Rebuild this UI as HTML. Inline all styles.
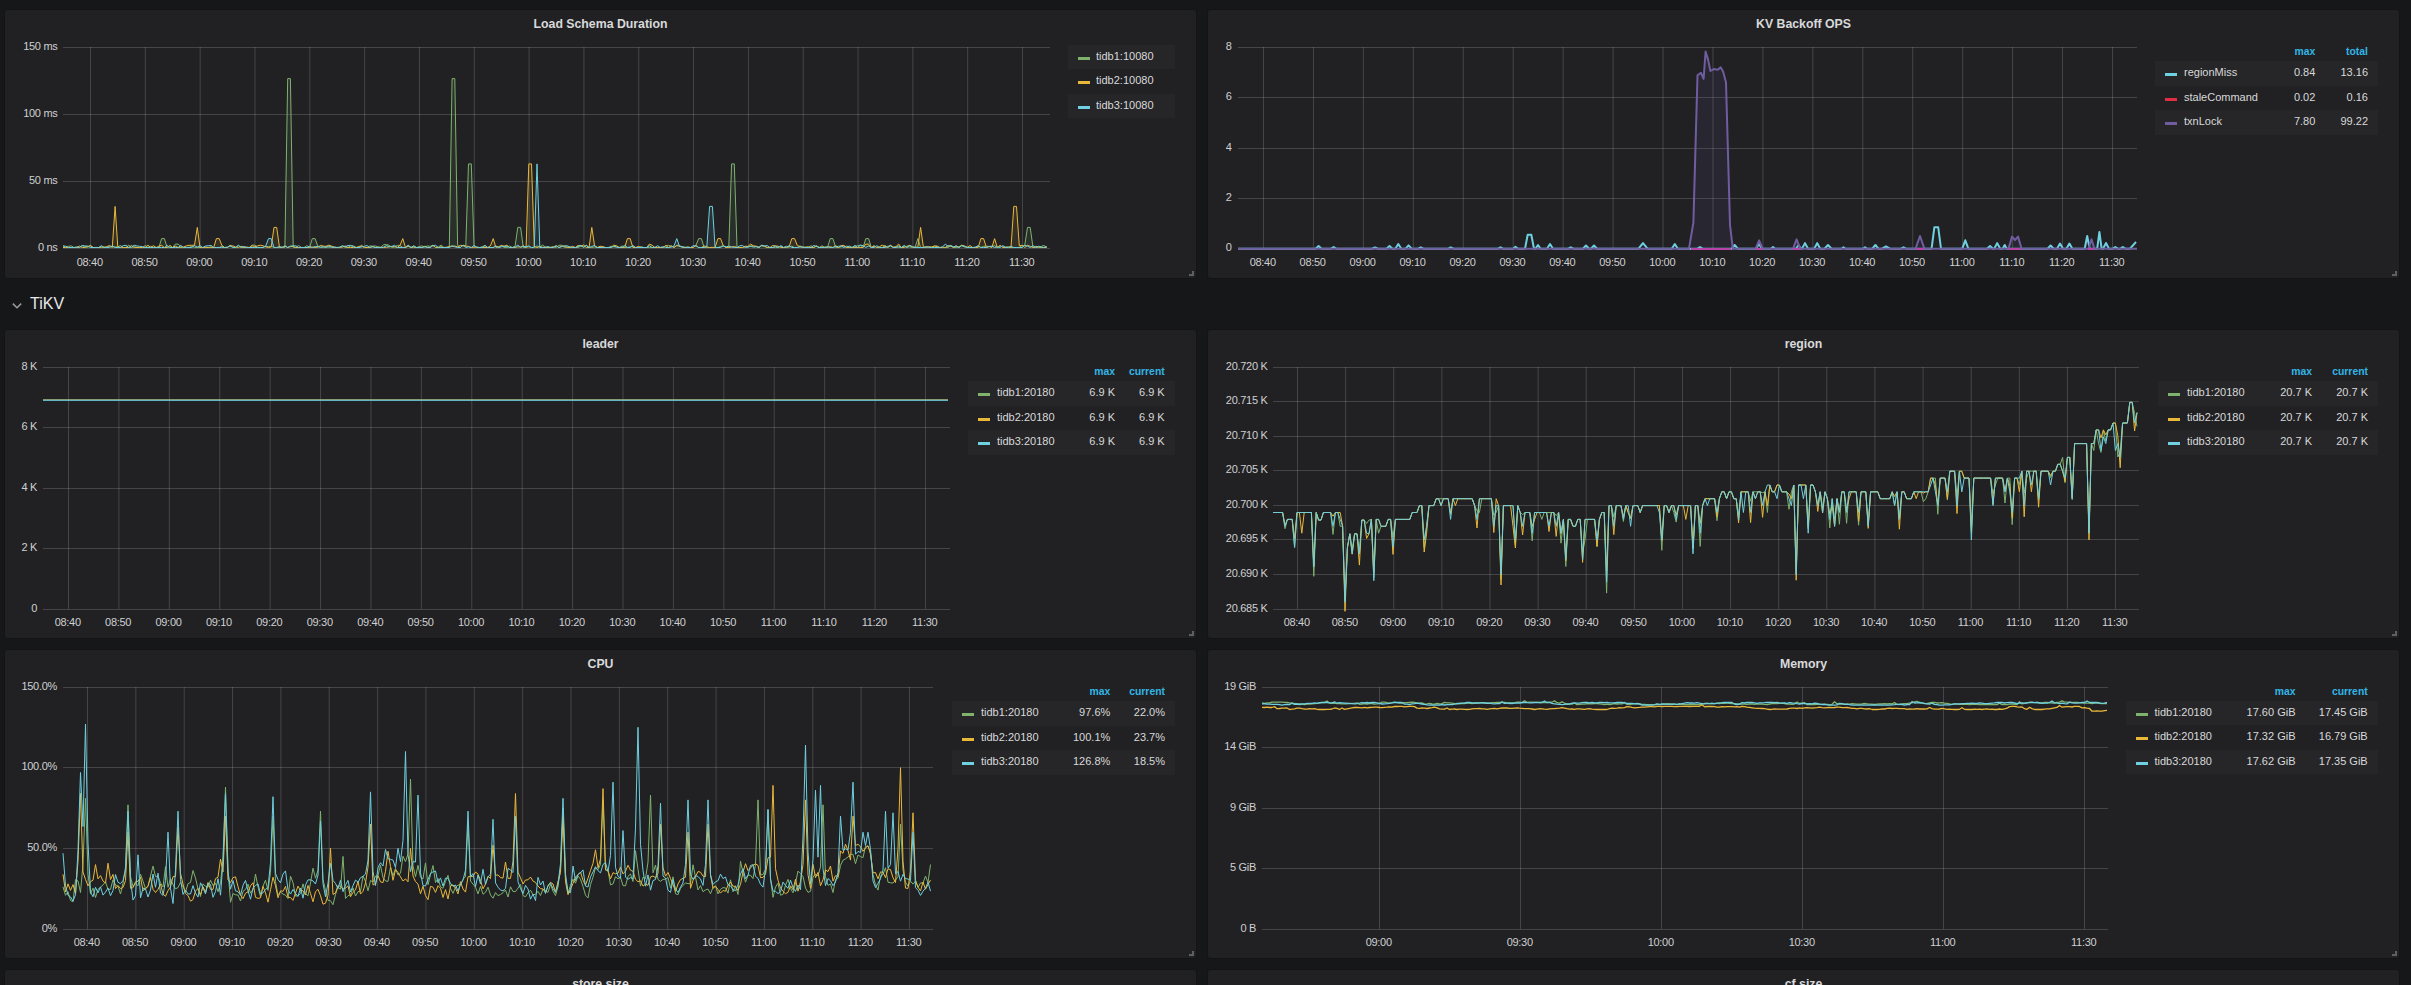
<!DOCTYPE html><html><head><meta charset="utf-8"><title>TiDB dashboard</title><style>

html,body{margin:0;padding:0;}
body{width:2411px;height:985px;background:#161719;position:relative;overflow:hidden;font-family:"Liberation Sans", sans-serif;}
.panel{position:absolute;box-sizing:border-box;background:#212124;border:1px solid #141414;border-radius:3px;}
.ptitle{position:absolute;text-align:center;font-size:12.3px;font-weight:bold;color:#d8d9da;line-height:24px;height:24px;white-space:nowrap;}
.rh{position:absolute;width:6px;height:6px;}
.rh:before{content:"";position:absolute;left:3px;top:1px;width:2px;height:5px;background:#5f5f5f;}
.rh:after{content:"";position:absolute;left:0px;top:4px;width:5px;height:2px;background:#5f5f5f;}
svg{position:absolute;left:0;top:0;}
svg text{font-family:"Liberation Sans", sans-serif;font-size:11px;fill:#cfd0d1;letter-spacing:-0.3px;}
svg text.xl{letter-spacing:-0.3px;}
.leg{position:absolute;left:0;top:0;width:2411px;height:985px;font-size:11px;color:#d8d9da;}
.lrow{position:absolute;background:#262628;}
.sw{position:absolute;width:12px;height:3px;}
.lname,.lval,.lhead{position:absolute;white-space:nowrap;line-height:15px;}
.lval{text-align:right;}
.lhead{text-align:right;font-weight:bold;color:#33b5e5;font-size:10.4px;}
.rowhdr{position:absolute;left:30px;top:292px;font-size:16px;color:#e8e8e8;line-height:24px;}

</style></head><body>
<div class="panel" style="left:4px;top:9px;width:1193px;height:270px"></div>
<div class="ptitle" style="left:4px;top:11.5px;width:1193px">Load Schema Duration</div>
<div class="rh" style="left:1189px;top:270px"></div>
<div class="panel" style="left:1207px;top:9px;width:1193px;height:270px"></div>
<div class="ptitle" style="left:1207px;top:11.5px;width:1193px">KV Backoff OPS</div>
<div class="rh" style="left:2392px;top:270px"></div>
<div class="panel" style="left:4px;top:329px;width:1193px;height:310px"></div>
<div class="ptitle" style="left:4px;top:331.5px;width:1193px">leader</div>
<div class="rh" style="left:1189px;top:630px"></div>
<div class="panel" style="left:1207px;top:329px;width:1193px;height:310px"></div>
<div class="ptitle" style="left:1207px;top:331.5px;width:1193px">region</div>
<div class="rh" style="left:2392px;top:630px"></div>
<div class="panel" style="left:4px;top:649px;width:1193px;height:310px"></div>
<div class="ptitle" style="left:4px;top:651.5px;width:1193px">CPU</div>
<div class="rh" style="left:1189px;top:950px"></div>
<div class="panel" style="left:1207px;top:649px;width:1193px;height:310px"></div>
<div class="ptitle" style="left:1207px;top:651.5px;width:1193px">Memory</div>
<div class="rh" style="left:2392px;top:950px"></div>
<div class="panel" style="left:4px;top:969px;width:1193px;height:310px"></div>
<div class="ptitle" style="left:4px;top:971.5px;width:1193px">store size</div>
<div class="panel" style="left:1207px;top:969px;width:1193px;height:310px"></div>
<div class="ptitle" style="left:1207px;top:971.5px;width:1193px">cf size</div>
<svg width="30" height="30" style="left:0px;top:290px" viewBox="0 0 30 30"><path d="M12.8,13.6 L17,17.8 L21.2,13.6" fill="none" stroke="#9a9a9a" stroke-width="1.5"/></svg>
<div class="rowhdr">TiKV</div>
<div class="leg">
<div class="lrow" style="left:1068px;top:45.0px;width:107px;height:24.4px"></div>
<div class="sw" style="left:1078px;top:56.8px;background:#7eb26d"></div>
<div class="lname" style="left:1096px;top:48.8px">tidb1:10080</div>
<div class="sw" style="left:1078px;top:81.2px;background:#eab839"></div>
<div class="lname" style="left:1096px;top:73.2px">tidb2:10080</div>
<div class="lrow" style="left:1068px;top:93.9px;width:107px;height:24.4px"></div>
<div class="sw" style="left:1078px;top:105.7px;background:#6ed0e0"></div>
<div class="lname" style="left:1096px;top:97.7px">tidb3:10080</div>
</div>
<div class="leg">
<div class="lhead" style="right:95.69999999999982px;top:44.2px">max</div>
<div class="lhead" style="right:43px;top:44.2px">total</div>
<div class="lrow" style="left:2155px;top:61.4px;width:223px;height:24.4px"></div>
<div class="sw" style="left:2165px;top:73.2px;background:#6ed0e0"></div>
<div class="lname" style="left:2184px;top:65.2px">regionMiss</div>
<div class="lval" style="right:95.69999999999982px;top:65.2px">0.84</div>
<div class="lval" style="right:43px;top:65.2px">13.16</div>
<div class="sw" style="left:2165px;top:97.6px;background:#e02f44"></div>
<div class="lname" style="left:2184px;top:89.6px">staleCommand</div>
<div class="lval" style="right:95.69999999999982px;top:89.6px">0.02</div>
<div class="lval" style="right:43px;top:89.6px">0.16</div>
<div class="lrow" style="left:2155px;top:110.3px;width:223px;height:24.4px"></div>
<div class="sw" style="left:2165px;top:122.1px;background:#705da0"></div>
<div class="lname" style="left:2184px;top:114.1px">txnLock</div>
<div class="lval" style="right:95.69999999999982px;top:114.1px">7.80</div>
<div class="lval" style="right:43px;top:114.1px">99.22</div>
</div>
<div class="leg">
<div class="lhead" style="right:1296px;top:364.2px">max</div>
<div class="lhead" style="right:1246.3px;top:364.2px">current</div>
<div class="lrow" style="left:968px;top:381.4px;width:207px;height:24.4px"></div>
<div class="sw" style="left:978px;top:393.2px;background:#7eb26d"></div>
<div class="lname" style="left:997px;top:385.2px">tidb1:20180</div>
<div class="lval" style="right:1296px;top:385.2px">6.9 K</div>
<div class="lval" style="right:1246.3px;top:385.2px">6.9 K</div>
<div class="sw" style="left:978px;top:417.6px;background:#eab839"></div>
<div class="lname" style="left:997px;top:409.6px">tidb2:20180</div>
<div class="lval" style="right:1296px;top:409.6px">6.9 K</div>
<div class="lval" style="right:1246.3px;top:409.6px">6.9 K</div>
<div class="lrow" style="left:968px;top:430.3px;width:207px;height:24.4px"></div>
<div class="sw" style="left:978px;top:442.1px;background:#6ed0e0"></div>
<div class="lname" style="left:997px;top:434.1px">tidb3:20180</div>
<div class="lval" style="right:1296px;top:434.1px">6.9 K</div>
<div class="lval" style="right:1246.3px;top:434.1px">6.9 K</div>
</div>
<div class="leg">
<div class="lhead" style="right:99px;top:364.1px">max</div>
<div class="lhead" style="right:43px;top:364.1px">current</div>
<div class="lrow" style="left:2158px;top:381.3px;width:220px;height:24.4px"></div>
<div class="sw" style="left:2168px;top:393.1px;background:#7eb26d"></div>
<div class="lname" style="left:2187px;top:385.1px">tidb1:20180</div>
<div class="lval" style="right:99px;top:385.1px">20.7 K</div>
<div class="lval" style="right:43px;top:385.1px">20.7 K</div>
<div class="sw" style="left:2168px;top:417.6px;background:#eab839"></div>
<div class="lname" style="left:2187px;top:409.6px">tidb2:20180</div>
<div class="lval" style="right:99px;top:409.6px">20.7 K</div>
<div class="lval" style="right:43px;top:409.6px">20.7 K</div>
<div class="lrow" style="left:2158px;top:430.2px;width:220px;height:24.4px"></div>
<div class="sw" style="left:2168px;top:442.0px;background:#6ed0e0"></div>
<div class="lname" style="left:2187px;top:434.0px">tidb3:20180</div>
<div class="lval" style="right:99px;top:434.0px">20.7 K</div>
<div class="lval" style="right:43px;top:434.0px">20.7 K</div>
</div>
<div class="leg">
<div class="lhead" style="right:1300.7px;top:684.1px">max</div>
<div class="lhead" style="right:1246px;top:684.1px">current</div>
<div class="lrow" style="left:952px;top:701.3px;width:223px;height:24.4px"></div>
<div class="sw" style="left:962px;top:713.1px;background:#7eb26d"></div>
<div class="lname" style="left:981px;top:705.1px">tidb1:20180</div>
<div class="lval" style="right:1300.7px;top:705.1px">97.6%</div>
<div class="lval" style="right:1246px;top:705.1px">22.0%</div>
<div class="sw" style="left:962px;top:737.5px;background:#eab839"></div>
<div class="lname" style="left:981px;top:729.5px">tidb2:20180</div>
<div class="lval" style="right:1300.7px;top:729.5px">100.1%</div>
<div class="lval" style="right:1246px;top:729.5px">23.7%</div>
<div class="lrow" style="left:952px;top:750.2px;width:223px;height:24.4px"></div>
<div class="sw" style="left:962px;top:762.0px;background:#6ed0e0"></div>
<div class="lname" style="left:981px;top:754.0px">tidb3:20180</div>
<div class="lval" style="right:1300.7px;top:754.0px">126.8%</div>
<div class="lval" style="right:1246px;top:754.0px">18.5%</div>
</div>
<div class="leg">
<div class="lhead" style="right:115.5px;top:683.8px">max</div>
<div class="lhead" style="right:43.30000000000018px;top:683.8px">current</div>
<div class="lrow" style="left:2126px;top:701.0px;width:252px;height:24.4px"></div>
<div class="sw" style="left:2135.5px;top:712.8px;background:#7eb26d"></div>
<div class="lname" style="left:2154.4px;top:704.8px">tidb1:20180</div>
<div class="lval" style="right:115.5px;top:704.8px">17.60 GiB</div>
<div class="lval" style="right:43.30000000000018px;top:704.8px">17.45 GiB</div>
<div class="sw" style="left:2135.5px;top:737.2px;background:#eab839"></div>
<div class="lname" style="left:2154.4px;top:729.2px">tidb2:20180</div>
<div class="lval" style="right:115.5px;top:729.2px">17.32 GiB</div>
<div class="lval" style="right:43.30000000000018px;top:729.2px">16.79 GiB</div>
<div class="lrow" style="left:2126px;top:749.9px;width:252px;height:24.4px"></div>
<div class="sw" style="left:2135.5px;top:761.7px;background:#6ed0e0"></div>
<div class="lname" style="left:2154.4px;top:753.7px">tidb3:20180</div>
<div class="lval" style="right:115.5px;top:753.7px">17.62 GiB</div>
<div class="lval" style="right:43.30000000000018px;top:753.7px">17.35 GiB</div>
</div>
<svg width="2411" height="985"><rect x="63" y="47" width="987" height="1" fill="rgba(200,200,200,0.22)"/><rect x="63" y="114" width="987" height="1" fill="rgba(200,200,200,0.22)"/><rect x="63" y="181" width="987" height="1" fill="rgba(200,200,200,0.22)"/><rect x="63" y="248" width="987" height="1" fill="rgba(200,200,200,0.22)"/><rect x="90.00" y="47" width="1" height="201" fill="rgba(200,200,200,0.22)"/><rect x="144.82" y="47" width="1" height="201" fill="rgba(200,200,200,0.22)"/><rect x="199.65" y="47" width="1" height="201" fill="rgba(200,200,200,0.22)"/><rect x="254.47" y="47" width="1" height="201" fill="rgba(200,200,200,0.22)"/><rect x="309.30" y="47" width="1" height="201" fill="rgba(200,200,200,0.22)"/><rect x="364.12" y="47" width="1" height="201" fill="rgba(200,200,200,0.22)"/><rect x="418.94" y="47" width="1" height="201" fill="rgba(200,200,200,0.22)"/><rect x="473.77" y="47" width="1" height="201" fill="rgba(200,200,200,0.22)"/><rect x="528.59" y="47" width="1" height="201" fill="rgba(200,200,200,0.22)"/><rect x="583.42" y="47" width="1" height="201" fill="rgba(200,200,200,0.22)"/><rect x="638.24" y="47" width="1" height="201" fill="rgba(200,200,200,0.22)"/><rect x="693.06" y="47" width="1" height="201" fill="rgba(200,200,200,0.22)"/><rect x="747.89" y="47" width="1" height="201" fill="rgba(200,200,200,0.22)"/><rect x="802.71" y="47" width="1" height="201" fill="rgba(200,200,200,0.22)"/><rect x="857.54" y="47" width="1" height="201" fill="rgba(200,200,200,0.22)"/><rect x="912.36" y="47" width="1" height="201" fill="rgba(200,200,200,0.22)"/><rect x="967.18" y="47" width="1" height="201" fill="rgba(200,200,200,0.22)"/><rect x="1022.01" y="47" width="1" height="201" fill="rgba(200,200,200,0.22)"/><path d="M63.0,247.5L63.0,245.5L65.7,247.5L68.5,246.3L71.2,245.9L74.0,247.5L76.7,247.4L79.4,247.5L82.2,245.7L84.9,246.4L87.7,247.5L90.4,245.2L93.1,247.5L95.9,247.4L98.6,247.5L101.4,247.5L104.1,247.0L106.8,247.4L109.6,246.4L112.3,246.9L115.1,247.0L117.8,246.8L120.5,245.5L123.3,247.5L126.0,247.5L128.8,245.1L131.5,247.5L134.2,246.7L137.0,247.5L139.7,247.5L142.5,247.5L145.2,245.5L147.9,247.5L150.7,246.1L153.4,247.5L156.2,247.5L158.9,247.5L161.6,238.6L164.4,238.6L167.1,247.5L169.9,247.1L172.6,247.5L175.3,244.1L178.1,244.1L180.8,246.4L183.6,247.5L186.3,247.5L189.0,247.5L191.8,246.3L194.5,247.4L197.3,247.5L200.0,247.5L202.7,247.5L205.5,247.1L208.2,247.5L211.0,247.5L213.7,247.5L216.4,247.5L219.2,247.5L221.9,246.3L224.7,247.5L227.4,247.5L230.1,245.1L232.9,247.5L235.6,247.5L238.4,245.6L241.1,247.5L243.8,247.5L246.6,247.5L249.3,247.5L252.1,245.1L254.8,245.1L257.5,247.4L260.3,247.5L263.0,247.5L265.8,246.3L268.5,246.6L271.2,246.2L274.0,247.5L276.7,247.5L279.5,247.4L282.2,247.1L284.9,247.5L287.7,78.6L290.4,78.6L293.2,247.5L295.9,247.5L298.6,245.5L301.4,247.5L304.1,247.5L306.9,245.7L309.6,247.2L312.3,238.6L315.1,238.6L317.8,246.2L320.6,246.8L323.3,247.5L326.0,246.7L328.8,247.4L331.5,246.5L334.3,247.2L337.0,247.5L339.7,247.5L342.5,246.0L345.2,247.5L348.0,247.5L350.7,245.8L353.4,245.8L356.2,247.5L358.9,247.5L361.7,245.2L364.4,247.5L367.1,247.5L369.9,245.9L372.6,246.1L375.4,246.0L378.1,246.8L380.8,247.5L383.6,244.6L386.3,244.6L389.1,245.2L391.8,247.5L394.5,246.9L397.3,245.4L400.0,245.5L402.8,247.5L405.5,247.5L408.2,245.4L411.0,247.5L413.7,247.5L416.5,247.5L419.2,246.7L421.9,245.9L424.7,247.0L427.4,245.9L430.2,246.3L432.9,245.4L435.6,247.5L438.4,247.0L441.1,245.1L443.9,247.5L446.6,247.0L449.3,247.5L452.1,78.6L454.8,78.6L457.6,245.4L460.3,247.5L463.0,245.1L465.8,245.8L468.5,163.9L471.3,163.9L474.0,245.7L476.7,247.5L479.5,247.5L482.2,246.7L485.0,245.4L487.7,247.5L490.4,247.5L493.2,247.5L495.9,246.2L498.7,247.4L501.4,245.4L504.1,247.5L506.9,247.5L509.6,246.0L512.4,247.5L515.1,246.1L517.8,227.4L520.6,227.4L523.3,247.5L526.1,247.5L528.8,246.8L531.5,247.5L534.3,247.5L537.0,245.9L539.8,247.2L542.5,245.1L545.2,246.9L548.0,247.5L550.7,247.2L553.5,246.9L556.2,247.5L558.9,245.3L561.7,245.2L564.4,247.5L567.2,246.9L569.9,247.3L572.6,247.5L575.4,247.5L578.1,247.5L580.9,246.1L583.6,246.7L586.3,245.3L589.1,247.5L591.8,247.5L594.6,247.0L597.3,247.5L600.0,247.5L602.8,247.5L605.5,247.5L608.3,247.5L611.0,246.2L613.7,246.9L616.5,246.8L619.2,247.5L622.0,245.9L624.7,247.5L627.4,247.5L630.2,246.8L632.9,246.7L635.7,247.5L638.4,247.5L641.1,246.7L643.9,247.5L646.6,247.5L649.4,247.5L652.1,247.5L654.8,247.3L657.6,247.5L660.3,247.3L663.1,247.5L665.8,245.6L668.5,245.4L671.3,246.3L674.0,247.5L676.8,245.2L679.5,245.6L682.2,247.5L685.0,247.5L687.7,247.2L690.5,247.5L693.2,247.5L695.9,245.4L698.7,238.6L701.4,238.6L704.2,247.5L706.9,247.5L709.6,247.5L712.4,247.5L715.1,247.5L717.9,247.5L720.6,246.5L723.3,245.8L726.1,247.5L728.8,247.3L731.6,163.9L734.3,163.9L737.0,247.5L739.8,247.5L742.5,247.5L745.3,246.6L748.0,246.9L750.7,245.9L753.5,246.1L756.2,246.6L759.0,247.2L761.7,245.5L764.4,246.5L767.2,247.5L769.9,247.5L772.7,247.5L775.4,247.5L778.1,247.5L780.9,245.9L783.6,247.5L786.4,246.3L789.1,247.0L791.8,246.2L794.6,247.5L797.3,247.5L800.1,245.9L802.8,247.3L805.5,247.5L808.3,247.5L811.0,245.7L813.8,247.5L816.5,245.8L819.2,247.5L822.0,245.8L824.7,247.5L827.5,247.5L830.2,238.6L832.9,238.6L835.7,247.5L838.4,247.5L841.2,246.9L843.9,246.1L846.6,247.5L849.4,245.9L852.1,247.5L854.9,246.3L857.6,245.7L860.3,245.1L863.1,247.5L865.8,238.6L868.6,238.6L871.3,247.5L874.0,245.6L876.8,247.5L879.5,247.5L882.3,247.5L885.0,245.3L887.7,247.5L890.5,245.6L893.2,247.1L896.0,247.2L898.7,247.5L901.4,247.5L904.2,246.1L906.9,247.2L909.7,246.9L912.4,247.5L915.1,247.0L917.9,238.6L920.6,247.5L923.4,247.5L926.1,247.5L928.8,246.8L931.6,247.5L934.3,246.1L937.1,245.9L939.8,247.5L942.5,247.5L945.3,247.5L948.0,247.5L950.8,245.4L953.5,247.5L956.2,247.5L959.0,246.8L961.7,245.6L964.5,245.7L967.2,247.5L969.9,247.5L972.7,247.5L975.4,247.5L978.2,246.3L980.9,247.5L983.6,246.3L986.4,246.2L989.1,246.4L991.9,246.8L994.6,245.6L997.3,247.5L1000.1,245.9L1002.8,247.0L1005.6,246.8L1008.3,247.5L1011.0,247.5L1013.8,247.5L1016.5,247.5L1019.3,247.5L1022.0,245.5L1024.7,245.7L1027.5,227.4L1030.2,227.4L1033.0,247.5L1035.7,247.5L1038.4,247.5L1041.2,246.5L1043.9,245.4L1046.7,247.5L1046.7,247.5Z" fill="#7eb26d" fill-opacity="0.1" stroke="none"/><path d="M63.0,245.5L65.7,247.5L68.5,246.3L71.2,245.9L74.0,247.5L76.7,247.4L79.4,247.5L82.2,245.7L84.9,246.4L87.7,247.5L90.4,245.2L93.1,247.5L95.9,247.4L98.6,247.5L101.4,247.5L104.1,247.0L106.8,247.4L109.6,246.4L112.3,246.9L115.1,247.0L117.8,246.8L120.5,245.5L123.3,247.5L126.0,247.5L128.8,245.1L131.5,247.5L134.2,246.7L137.0,247.5L139.7,247.5L142.5,247.5L145.2,245.5L147.9,247.5L150.7,246.1L153.4,247.5L156.2,247.5L158.9,247.5L161.6,238.6L164.4,238.6L167.1,247.5L169.9,247.1L172.6,247.5L175.3,244.1L178.1,244.1L180.8,246.4L183.6,247.5L186.3,247.5L189.0,247.5L191.8,246.3L194.5,247.4L197.3,247.5L200.0,247.5L202.7,247.5L205.5,247.1L208.2,247.5L211.0,247.5L213.7,247.5L216.4,247.5L219.2,247.5L221.9,246.3L224.7,247.5L227.4,247.5L230.1,245.1L232.9,247.5L235.6,247.5L238.4,245.6L241.1,247.5L243.8,247.5L246.6,247.5L249.3,247.5L252.1,245.1L254.8,245.1L257.5,247.4L260.3,247.5L263.0,247.5L265.8,246.3L268.5,246.6L271.2,246.2L274.0,247.5L276.7,247.5L279.5,247.4L282.2,247.1L284.9,247.5L287.7,78.6L290.4,78.6L293.2,247.5L295.9,247.5L298.6,245.5L301.4,247.5L304.1,247.5L306.9,245.7L309.6,247.2L312.3,238.6L315.1,238.6L317.8,246.2L320.6,246.8L323.3,247.5L326.0,246.7L328.8,247.4L331.5,246.5L334.3,247.2L337.0,247.5L339.7,247.5L342.5,246.0L345.2,247.5L348.0,247.5L350.7,245.8L353.4,245.8L356.2,247.5L358.9,247.5L361.7,245.2L364.4,247.5L367.1,247.5L369.9,245.9L372.6,246.1L375.4,246.0L378.1,246.8L380.8,247.5L383.6,244.6L386.3,244.6L389.1,245.2L391.8,247.5L394.5,246.9L397.3,245.4L400.0,245.5L402.8,247.5L405.5,247.5L408.2,245.4L411.0,247.5L413.7,247.5L416.5,247.5L419.2,246.7L421.9,245.9L424.7,247.0L427.4,245.9L430.2,246.3L432.9,245.4L435.6,247.5L438.4,247.0L441.1,245.1L443.9,247.5L446.6,247.0L449.3,247.5L452.1,78.6L454.8,78.6L457.6,245.4L460.3,247.5L463.0,245.1L465.8,245.8L468.5,163.9L471.3,163.9L474.0,245.7L476.7,247.5L479.5,247.5L482.2,246.7L485.0,245.4L487.7,247.5L490.4,247.5L493.2,247.5L495.9,246.2L498.7,247.4L501.4,245.4L504.1,247.5L506.9,247.5L509.6,246.0L512.4,247.5L515.1,246.1L517.8,227.4L520.6,227.4L523.3,247.5L526.1,247.5L528.8,246.8L531.5,247.5L534.3,247.5L537.0,245.9L539.8,247.2L542.5,245.1L545.2,246.9L548.0,247.5L550.7,247.2L553.5,246.9L556.2,247.5L558.9,245.3L561.7,245.2L564.4,247.5L567.2,246.9L569.9,247.3L572.6,247.5L575.4,247.5L578.1,247.5L580.9,246.1L583.6,246.7L586.3,245.3L589.1,247.5L591.8,247.5L594.6,247.0L597.3,247.5L600.0,247.5L602.8,247.5L605.5,247.5L608.3,247.5L611.0,246.2L613.7,246.9L616.5,246.8L619.2,247.5L622.0,245.9L624.7,247.5L627.4,247.5L630.2,246.8L632.9,246.7L635.7,247.5L638.4,247.5L641.1,246.7L643.9,247.5L646.6,247.5L649.4,247.5L652.1,247.5L654.8,247.3L657.6,247.5L660.3,247.3L663.1,247.5L665.8,245.6L668.5,245.4L671.3,246.3L674.0,247.5L676.8,245.2L679.5,245.6L682.2,247.5L685.0,247.5L687.7,247.2L690.5,247.5L693.2,247.5L695.9,245.4L698.7,238.6L701.4,238.6L704.2,247.5L706.9,247.5L709.6,247.5L712.4,247.5L715.1,247.5L717.9,247.5L720.6,246.5L723.3,245.8L726.1,247.5L728.8,247.3L731.6,163.9L734.3,163.9L737.0,247.5L739.8,247.5L742.5,247.5L745.3,246.6L748.0,246.9L750.7,245.9L753.5,246.1L756.2,246.6L759.0,247.2L761.7,245.5L764.4,246.5L767.2,247.5L769.9,247.5L772.7,247.5L775.4,247.5L778.1,247.5L780.9,245.9L783.6,247.5L786.4,246.3L789.1,247.0L791.8,246.2L794.6,247.5L797.3,247.5L800.1,245.9L802.8,247.3L805.5,247.5L808.3,247.5L811.0,245.7L813.8,247.5L816.5,245.8L819.2,247.5L822.0,245.8L824.7,247.5L827.5,247.5L830.2,238.6L832.9,238.6L835.7,247.5L838.4,247.5L841.2,246.9L843.9,246.1L846.6,247.5L849.4,245.9L852.1,247.5L854.9,246.3L857.6,245.7L860.3,245.1L863.1,247.5L865.8,238.6L868.6,238.6L871.3,247.5L874.0,245.6L876.8,247.5L879.5,247.5L882.3,247.5L885.0,245.3L887.7,247.5L890.5,245.6L893.2,247.1L896.0,247.2L898.7,247.5L901.4,247.5L904.2,246.1L906.9,247.2L909.7,246.9L912.4,247.5L915.1,247.0L917.9,238.6L920.6,247.5L923.4,247.5L926.1,247.5L928.8,246.8L931.6,247.5L934.3,246.1L937.1,245.9L939.8,247.5L942.5,247.5L945.3,247.5L948.0,247.5L950.8,245.4L953.5,247.5L956.2,247.5L959.0,246.8L961.7,245.6L964.5,245.7L967.2,247.5L969.9,247.5L972.7,247.5L975.4,247.5L978.2,246.3L980.9,247.5L983.6,246.3L986.4,246.2L989.1,246.4L991.9,246.8L994.6,245.6L997.3,247.5L1000.1,245.9L1002.8,247.0L1005.6,246.8L1008.3,247.5L1011.0,247.5L1013.8,247.5L1016.5,247.5L1019.3,247.5L1022.0,245.5L1024.7,245.7L1027.5,227.4L1030.2,227.4L1033.0,247.5L1035.7,247.5L1038.4,247.5L1041.2,246.5L1043.9,245.4L1046.7,247.5" fill="none" stroke="#7eb26d" stroke-width="1" stroke-linejoin="round"/><path d="M63.0,247.5L63.0,247.5L65.7,247.5L68.5,247.3L71.2,247.5L74.0,247.5L76.7,247.5L79.4,246.0L82.2,247.5L84.9,247.5L87.7,246.5L90.4,245.8L93.1,247.5L95.9,247.5L98.6,247.5L101.4,246.9L104.1,247.4L106.8,246.7L109.6,245.4L112.3,247.5L115.1,206.4L117.8,247.4L120.5,247.2L123.3,247.5L126.0,247.5L128.8,247.5L131.5,245.4L134.2,247.5L137.0,247.5L139.7,247.5L142.5,247.5L145.2,247.5L147.9,245.1L150.7,247.5L153.4,245.7L156.2,247.5L158.9,246.2L161.6,245.3L164.4,247.5L167.1,247.5L169.9,245.4L172.6,247.5L175.3,246.1L178.1,247.5L180.8,247.5L183.6,247.0L186.3,245.8L189.0,245.3L191.8,245.3L194.5,245.2L197.3,227.4L200.0,247.5L202.7,247.5L205.5,247.5L208.2,247.5L211.0,247.0L213.7,247.5L216.4,238.6L219.2,238.6L221.9,245.5L224.7,247.5L227.4,247.5L230.1,245.7L232.9,245.9L235.6,247.0L238.4,247.5L241.1,246.2L243.8,247.5L246.6,247.0L249.3,247.5L252.1,245.8L254.8,246.6L257.5,245.9L260.3,245.2L263.0,245.8L265.8,246.9L268.5,247.5L271.2,247.1L274.0,227.4L276.7,227.4L279.5,247.5L282.2,247.4L284.9,246.0L287.7,247.5L290.4,246.7L293.2,246.4L295.9,247.5L298.6,247.5L301.4,247.5L304.1,247.5L306.9,247.5L309.6,247.5L312.3,247.0L315.1,247.5L317.8,247.3L320.6,245.4L323.3,246.1L326.0,246.3L328.8,245.2L331.5,246.0L334.3,247.5L337.0,247.5L339.7,247.4L342.5,247.1L345.2,246.0L348.0,247.5L350.7,247.5L353.4,247.5L356.2,247.5L358.9,246.4L361.7,246.1L364.4,247.5L367.1,247.5L369.9,247.5L372.6,246.5L375.4,247.5L378.1,247.4L380.8,247.2L383.6,247.5L386.3,247.3L389.1,246.9L391.8,246.3L394.5,246.8L397.3,247.5L400.0,245.3L402.8,238.6L405.5,247.5L408.2,246.3L411.0,247.5L413.7,246.5L416.5,247.5L419.2,247.3L421.9,247.5L424.7,246.3L427.4,247.5L430.2,247.5L432.9,245.1L435.6,247.5L438.4,247.5L441.1,246.8L443.9,247.5L446.6,247.5L449.3,246.4L452.1,246.3L454.8,246.1L457.6,246.8L460.3,245.3L463.0,245.7L465.8,246.1L468.5,246.4L471.3,247.5L474.0,247.2L476.7,247.3L479.5,247.5L482.2,247.5L485.0,247.5L487.7,247.5L490.4,245.9L493.2,238.6L495.9,247.5L498.7,246.6L501.4,245.6L504.1,246.2L506.9,245.2L509.6,247.5L512.4,247.5L515.1,247.5L517.8,246.9L520.6,246.9L523.3,245.9L526.1,247.5L528.8,163.9L531.5,163.9L534.3,246.6L537.0,247.5L539.8,246.5L542.5,247.3L545.2,247.5L548.0,247.5L550.7,247.5L553.5,246.8L556.2,245.9L558.9,247.5L561.7,246.2L564.4,246.2L567.2,247.5L569.9,247.5L572.6,246.3L575.4,247.5L578.1,245.4L580.9,245.8L583.6,245.1L586.3,247.5L589.1,247.5L591.8,227.4L594.6,246.1L597.3,247.5L600.0,246.3L602.8,246.5L605.5,247.5L608.3,247.5L611.0,247.5L613.7,245.2L616.5,245.7L619.2,247.5L622.0,247.5L624.7,247.5L627.4,238.6L630.2,238.6L632.9,247.5L635.7,247.5L638.4,246.4L641.1,247.5L643.9,247.5L646.6,247.5L649.4,244.1L652.1,245.2L654.8,247.5L657.6,247.5L660.3,247.5L663.1,247.5L665.8,245.5L668.5,247.5L671.3,245.7L674.0,247.5L676.8,245.6L679.5,246.0L682.2,246.9L685.0,247.5L687.7,247.0L690.5,247.5L693.2,247.5L695.9,245.5L698.7,247.5L701.4,247.5L704.2,245.9L706.9,246.9L709.6,247.5L712.4,247.3L715.1,247.5L717.9,238.6L720.6,238.6L723.3,245.9L726.1,247.5L728.8,247.5L731.6,247.1L734.3,246.4L737.0,247.5L739.8,247.5L742.5,247.5L745.3,246.2L748.0,246.4L750.7,244.1L753.5,245.9L756.2,246.2L759.0,247.5L761.7,245.5L764.4,245.9L767.2,247.5L769.9,247.5L772.7,245.5L775.4,246.0L778.1,246.2L780.9,247.5L783.6,247.5L786.4,247.5L789.1,246.9L791.8,238.6L794.6,238.6L797.3,245.5L800.1,246.6L802.8,247.3L805.5,247.1L808.3,246.8L811.0,247.5L813.8,247.5L816.5,246.0L819.2,247.5L822.0,247.3L824.7,247.0L827.5,247.5L830.2,246.6L832.9,247.5L835.7,245.6L838.4,247.5L841.2,245.5L843.9,245.4L846.6,247.5L849.4,247.5L852.1,247.5L854.9,247.5L857.6,247.5L860.3,247.5L863.1,247.5L865.8,244.1L868.6,244.1L871.3,247.5L874.0,246.0L876.8,247.5L879.5,246.6L882.3,245.2L885.0,246.4L887.7,247.5L890.5,245.2L893.2,247.4L896.0,246.6L898.7,244.1L901.4,247.5L904.2,247.5L906.9,246.2L909.7,245.5L912.4,246.8L915.1,247.5L917.9,246.7L920.6,227.4L923.4,247.2L926.1,246.9L928.8,246.9L931.6,246.9L934.3,246.0L937.1,246.6L939.8,247.5L942.5,247.2L945.3,247.5L948.0,245.6L950.8,246.2L953.5,247.5L956.2,245.7L959.0,247.5L961.7,245.1L964.5,246.4L967.2,247.5L969.9,245.5L972.7,247.5L975.4,247.5L978.2,247.5L980.9,238.6L983.6,238.6L986.4,247.5L989.1,246.5L991.9,247.5L994.6,238.6L997.3,247.5L1000.1,245.3L1002.8,247.5L1005.6,247.5L1008.3,246.8L1011.0,247.5L1013.8,206.4L1016.5,206.4L1019.3,245.9L1022.0,245.2L1024.7,247.5L1027.5,245.3L1030.2,246.3L1033.0,247.5L1035.7,246.3L1038.4,247.0L1041.2,247.5L1043.9,247.5L1046.7,247.5L1046.7,247.5Z" fill="#eab839" fill-opacity="0.1" stroke="none"/><path d="M63.0,247.5L65.7,247.5L68.5,247.3L71.2,247.5L74.0,247.5L76.7,247.5L79.4,246.0L82.2,247.5L84.9,247.5L87.7,246.5L90.4,245.8L93.1,247.5L95.9,247.5L98.6,247.5L101.4,246.9L104.1,247.4L106.8,246.7L109.6,245.4L112.3,247.5L115.1,206.4L117.8,247.4L120.5,247.2L123.3,247.5L126.0,247.5L128.8,247.5L131.5,245.4L134.2,247.5L137.0,247.5L139.7,247.5L142.5,247.5L145.2,247.5L147.9,245.1L150.7,247.5L153.4,245.7L156.2,247.5L158.9,246.2L161.6,245.3L164.4,247.5L167.1,247.5L169.9,245.4L172.6,247.5L175.3,246.1L178.1,247.5L180.8,247.5L183.6,247.0L186.3,245.8L189.0,245.3L191.8,245.3L194.5,245.2L197.3,227.4L200.0,247.5L202.7,247.5L205.5,247.5L208.2,247.5L211.0,247.0L213.7,247.5L216.4,238.6L219.2,238.6L221.9,245.5L224.7,247.5L227.4,247.5L230.1,245.7L232.9,245.9L235.6,247.0L238.4,247.5L241.1,246.2L243.8,247.5L246.6,247.0L249.3,247.5L252.1,245.8L254.8,246.6L257.5,245.9L260.3,245.2L263.0,245.8L265.8,246.9L268.5,247.5L271.2,247.1L274.0,227.4L276.7,227.4L279.5,247.5L282.2,247.4L284.9,246.0L287.7,247.5L290.4,246.7L293.2,246.4L295.9,247.5L298.6,247.5L301.4,247.5L304.1,247.5L306.9,247.5L309.6,247.5L312.3,247.0L315.1,247.5L317.8,247.3L320.6,245.4L323.3,246.1L326.0,246.3L328.8,245.2L331.5,246.0L334.3,247.5L337.0,247.5L339.7,247.4L342.5,247.1L345.2,246.0L348.0,247.5L350.7,247.5L353.4,247.5L356.2,247.5L358.9,246.4L361.7,246.1L364.4,247.5L367.1,247.5L369.9,247.5L372.6,246.5L375.4,247.5L378.1,247.4L380.8,247.2L383.6,247.5L386.3,247.3L389.1,246.9L391.8,246.3L394.5,246.8L397.3,247.5L400.0,245.3L402.8,238.6L405.5,247.5L408.2,246.3L411.0,247.5L413.7,246.5L416.5,247.5L419.2,247.3L421.9,247.5L424.7,246.3L427.4,247.5L430.2,247.5L432.9,245.1L435.6,247.5L438.4,247.5L441.1,246.8L443.9,247.5L446.6,247.5L449.3,246.4L452.1,246.3L454.8,246.1L457.6,246.8L460.3,245.3L463.0,245.7L465.8,246.1L468.5,246.4L471.3,247.5L474.0,247.2L476.7,247.3L479.5,247.5L482.2,247.5L485.0,247.5L487.7,247.5L490.4,245.9L493.2,238.6L495.9,247.5L498.7,246.6L501.4,245.6L504.1,246.2L506.9,245.2L509.6,247.5L512.4,247.5L515.1,247.5L517.8,246.9L520.6,246.9L523.3,245.9L526.1,247.5L528.8,163.9L531.5,163.9L534.3,246.6L537.0,247.5L539.8,246.5L542.5,247.3L545.2,247.5L548.0,247.5L550.7,247.5L553.5,246.8L556.2,245.9L558.9,247.5L561.7,246.2L564.4,246.2L567.2,247.5L569.9,247.5L572.6,246.3L575.4,247.5L578.1,245.4L580.9,245.8L583.6,245.1L586.3,247.5L589.1,247.5L591.8,227.4L594.6,246.1L597.3,247.5L600.0,246.3L602.8,246.5L605.5,247.5L608.3,247.5L611.0,247.5L613.7,245.2L616.5,245.7L619.2,247.5L622.0,247.5L624.7,247.5L627.4,238.6L630.2,238.6L632.9,247.5L635.7,247.5L638.4,246.4L641.1,247.5L643.9,247.5L646.6,247.5L649.4,244.1L652.1,245.2L654.8,247.5L657.6,247.5L660.3,247.5L663.1,247.5L665.8,245.5L668.5,247.5L671.3,245.7L674.0,247.5L676.8,245.6L679.5,246.0L682.2,246.9L685.0,247.5L687.7,247.0L690.5,247.5L693.2,247.5L695.9,245.5L698.7,247.5L701.4,247.5L704.2,245.9L706.9,246.9L709.6,247.5L712.4,247.3L715.1,247.5L717.9,238.6L720.6,238.6L723.3,245.9L726.1,247.5L728.8,247.5L731.6,247.1L734.3,246.4L737.0,247.5L739.8,247.5L742.5,247.5L745.3,246.2L748.0,246.4L750.7,244.1L753.5,245.9L756.2,246.2L759.0,247.5L761.7,245.5L764.4,245.9L767.2,247.5L769.9,247.5L772.7,245.5L775.4,246.0L778.1,246.2L780.9,247.5L783.6,247.5L786.4,247.5L789.1,246.9L791.8,238.6L794.6,238.6L797.3,245.5L800.1,246.6L802.8,247.3L805.5,247.1L808.3,246.8L811.0,247.5L813.8,247.5L816.5,246.0L819.2,247.5L822.0,247.3L824.7,247.0L827.5,247.5L830.2,246.6L832.9,247.5L835.7,245.6L838.4,247.5L841.2,245.5L843.9,245.4L846.6,247.5L849.4,247.5L852.1,247.5L854.9,247.5L857.6,247.5L860.3,247.5L863.1,247.5L865.8,244.1L868.6,244.1L871.3,247.5L874.0,246.0L876.8,247.5L879.5,246.6L882.3,245.2L885.0,246.4L887.7,247.5L890.5,245.2L893.2,247.4L896.0,246.6L898.7,244.1L901.4,247.5L904.2,247.5L906.9,246.2L909.7,245.5L912.4,246.8L915.1,247.5L917.9,246.7L920.6,227.4L923.4,247.2L926.1,246.9L928.8,246.9L931.6,246.9L934.3,246.0L937.1,246.6L939.8,247.5L942.5,247.2L945.3,247.5L948.0,245.6L950.8,246.2L953.5,247.5L956.2,245.7L959.0,247.5L961.7,245.1L964.5,246.4L967.2,247.5L969.9,245.5L972.7,247.5L975.4,247.5L978.2,247.5L980.9,238.6L983.6,238.6L986.4,247.5L989.1,246.5L991.9,247.5L994.6,238.6L997.3,247.5L1000.1,245.3L1002.8,247.5L1005.6,247.5L1008.3,246.8L1011.0,247.5L1013.8,206.4L1016.5,206.4L1019.3,245.9L1022.0,245.2L1024.7,247.5L1027.5,245.3L1030.2,246.3L1033.0,247.5L1035.7,246.3L1038.4,247.0L1041.2,247.5L1043.9,247.5L1046.7,247.5" fill="none" stroke="#eab839" stroke-width="1" stroke-linejoin="round"/><path d="M63.0,247.5L63.0,246.2L65.7,246.1L68.5,247.5L71.2,247.5L74.0,247.5L76.7,246.9L79.4,247.5L82.2,245.5L84.9,246.0L87.7,246.0L90.4,247.5L93.1,247.5L95.9,247.5L98.6,247.5L101.4,245.7L104.1,247.5L106.8,247.4L109.6,247.5L112.3,245.8L115.1,247.5L117.8,247.5L120.5,247.5L123.3,245.6L126.0,245.3L128.8,247.5L131.5,247.2L134.2,245.2L137.0,246.0L139.7,246.3L142.5,246.7L145.2,247.5L147.9,247.5L150.7,247.5L153.4,247.5L156.2,247.5L158.9,247.5L161.6,247.5L164.4,247.5L167.1,245.4L169.9,247.5L172.6,247.5L175.3,247.5L178.1,247.5L180.8,245.5L183.6,247.5L186.3,247.3L189.0,247.5L191.8,247.5L194.5,245.6L197.3,247.1L200.0,245.7L202.7,247.5L205.5,246.0L208.2,245.8L211.0,245.4L213.7,247.5L216.4,247.5L219.2,247.5L221.9,247.3L224.7,247.5L227.4,247.0L230.1,246.0L232.9,247.4L235.6,247.5L238.4,245.2L241.1,247.5L243.8,246.4L246.6,247.5L249.3,247.5L252.1,247.5L254.8,247.5L257.5,247.5L260.3,247.5L263.0,247.5L265.8,245.8L268.5,238.6L271.2,238.6L274.0,247.5L276.7,247.5L279.5,246.5L282.2,247.5L284.9,246.0L287.7,247.5L290.4,246.0L293.2,245.9L295.9,245.8L298.6,247.5L301.4,247.4L304.1,247.5L306.9,247.5L309.6,246.4L312.3,247.5L315.1,246.6L317.8,246.6L320.6,247.5L323.3,246.6L326.0,247.5L328.8,246.1L331.5,247.5L334.3,247.0L337.0,247.5L339.7,247.1L342.5,245.8L345.2,246.7L348.0,245.5L350.7,245.4L353.4,246.7L356.2,247.5L358.9,247.5L361.7,247.0L364.4,246.2L367.1,245.6L369.9,247.5L372.6,246.8L375.4,247.5L378.1,247.5L380.8,247.5L383.6,247.2L386.3,245.6L389.1,246.7L391.8,246.5L394.5,245.3L397.3,247.5L400.0,247.5L402.8,247.5L405.5,247.5L408.2,245.2L411.0,247.5L413.7,245.7L416.5,247.5L419.2,247.5L421.9,247.5L424.7,246.7L427.4,247.3L430.2,247.5L432.9,245.6L435.6,245.3L438.4,247.5L441.1,247.5L443.9,247.5L446.6,247.5L449.3,247.5L452.1,245.7L454.8,246.8L457.6,247.5L460.3,247.5L463.0,245.2L465.8,247.5L468.5,246.9L471.3,247.5L474.0,245.6L476.7,247.0L479.5,247.5L482.2,247.5L485.0,245.6L487.7,247.5L490.4,247.5L493.2,247.5L495.9,246.0L498.7,247.5L501.4,246.8L504.1,246.2L506.9,246.4L509.6,247.5L512.4,247.4L515.1,247.2L517.8,245.2L520.6,247.5L523.3,246.3L526.1,246.7L528.8,245.9L531.5,247.5L534.3,247.0L537.0,163.9L539.8,247.5L542.5,247.5L545.2,247.3L548.0,246.6L550.7,247.5L553.5,247.5L556.2,245.6L558.9,247.5L561.7,246.6L564.4,245.8L567.2,245.8L569.9,246.9L572.6,247.5L575.4,247.5L578.1,246.5L580.9,245.4L583.6,247.5L586.3,245.3L589.1,247.5L591.8,246.4L594.6,245.5L597.3,247.5L600.0,247.5L602.8,247.5L605.5,247.5L608.3,247.5L611.0,247.5L613.7,246.1L616.5,247.2L619.2,247.5L622.0,247.3L624.7,245.4L627.4,247.4L630.2,247.5L632.9,245.5L635.7,247.5L638.4,247.5L641.1,247.5L643.9,247.5L646.6,247.5L649.4,245.7L652.1,247.5L654.8,247.5L657.6,245.7L660.3,247.5L663.1,246.7L665.8,247.5L668.5,247.5L671.3,247.1L674.0,246.0L676.8,238.6L679.5,246.6L682.2,246.7L685.0,247.3L687.7,247.5L690.5,247.5L693.2,245.7L695.9,245.8L698.7,247.5L701.4,247.5L704.2,247.5L706.9,246.0L709.6,206.4L712.4,206.4L715.1,247.5L717.9,247.5L720.6,247.5L723.3,245.8L726.1,246.9L728.8,246.1L731.6,246.9L734.3,247.5L737.0,247.5L739.8,245.8L742.5,245.5L745.3,247.5L748.0,247.0L750.7,246.3L753.5,247.1L756.2,246.7L759.0,247.5L761.7,245.1L764.4,246.1L767.2,245.5L769.9,247.5L772.7,247.5L775.4,245.8L778.1,247.5L780.9,245.7L783.6,247.5L786.4,246.9L789.1,245.8L791.8,247.5L794.6,247.5L797.3,247.5L800.1,247.0L802.8,247.1L805.5,247.5L808.3,247.5L811.0,247.5L813.8,245.4L816.5,246.5L819.2,247.5L822.0,247.3L824.7,247.5L827.5,246.6L830.2,247.5L832.9,247.5L835.7,246.7L838.4,246.3L841.2,246.1L843.9,247.5L846.6,246.2L849.4,246.8L852.1,247.5L854.9,245.4L857.6,247.5L860.3,245.2L863.1,245.6L865.8,247.5L868.6,245.9L871.3,247.5L874.0,247.5L876.8,245.7L879.5,247.5L882.3,247.5L885.0,247.5L887.7,246.3L890.5,245.8L893.2,247.5L896.0,247.5L898.7,246.0L901.4,247.5L904.2,245.4L906.9,247.5L909.7,245.3L912.4,246.7L915.1,247.5L917.9,247.5L920.6,247.5L923.4,247.5L926.1,246.8L928.8,247.3L931.6,247.5L934.3,247.5L937.1,247.5L939.8,247.5L942.5,246.9L945.3,244.1L948.0,246.3L950.8,245.7L953.5,246.7L956.2,246.2L959.0,247.5L961.7,245.5L964.5,246.9L967.2,247.2L969.9,247.5L972.7,247.5L975.4,247.0L978.2,245.7L980.9,247.5L983.6,247.5L986.4,247.5L989.1,246.5L991.9,246.2L994.6,247.5L997.3,246.9L1000.1,247.5L1002.8,245.6L1005.6,247.5L1008.3,247.5L1011.0,246.2L1013.8,247.5L1016.5,247.5L1019.3,247.5L1022.0,247.5L1024.7,245.4L1027.5,246.1L1030.2,247.5L1033.0,245.7L1035.7,247.5L1038.4,246.2L1041.2,247.0L1043.9,247.5L1046.7,246.3L1046.7,247.5Z" fill="#6ed0e0" fill-opacity="0.1" stroke="none"/><path d="M63.0,246.2L65.7,246.1L68.5,247.5L71.2,247.5L74.0,247.5L76.7,246.9L79.4,247.5L82.2,245.5L84.9,246.0L87.7,246.0L90.4,247.5L93.1,247.5L95.9,247.5L98.6,247.5L101.4,245.7L104.1,247.5L106.8,247.4L109.6,247.5L112.3,245.8L115.1,247.5L117.8,247.5L120.5,247.5L123.3,245.6L126.0,245.3L128.8,247.5L131.5,247.2L134.2,245.2L137.0,246.0L139.7,246.3L142.5,246.7L145.2,247.5L147.9,247.5L150.7,247.5L153.4,247.5L156.2,247.5L158.9,247.5L161.6,247.5L164.4,247.5L167.1,245.4L169.9,247.5L172.6,247.5L175.3,247.5L178.1,247.5L180.8,245.5L183.6,247.5L186.3,247.3L189.0,247.5L191.8,247.5L194.5,245.6L197.3,247.1L200.0,245.7L202.7,247.5L205.5,246.0L208.2,245.8L211.0,245.4L213.7,247.5L216.4,247.5L219.2,247.5L221.9,247.3L224.7,247.5L227.4,247.0L230.1,246.0L232.9,247.4L235.6,247.5L238.4,245.2L241.1,247.5L243.8,246.4L246.6,247.5L249.3,247.5L252.1,247.5L254.8,247.5L257.5,247.5L260.3,247.5L263.0,247.5L265.8,245.8L268.5,238.6L271.2,238.6L274.0,247.5L276.7,247.5L279.5,246.5L282.2,247.5L284.9,246.0L287.7,247.5L290.4,246.0L293.2,245.9L295.9,245.8L298.6,247.5L301.4,247.4L304.1,247.5L306.9,247.5L309.6,246.4L312.3,247.5L315.1,246.6L317.8,246.6L320.6,247.5L323.3,246.6L326.0,247.5L328.8,246.1L331.5,247.5L334.3,247.0L337.0,247.5L339.7,247.1L342.5,245.8L345.2,246.7L348.0,245.5L350.7,245.4L353.4,246.7L356.2,247.5L358.9,247.5L361.7,247.0L364.4,246.2L367.1,245.6L369.9,247.5L372.6,246.8L375.4,247.5L378.1,247.5L380.8,247.5L383.6,247.2L386.3,245.6L389.1,246.7L391.8,246.5L394.5,245.3L397.3,247.5L400.0,247.5L402.8,247.5L405.5,247.5L408.2,245.2L411.0,247.5L413.7,245.7L416.5,247.5L419.2,247.5L421.9,247.5L424.7,246.7L427.4,247.3L430.2,247.5L432.9,245.6L435.6,245.3L438.4,247.5L441.1,247.5L443.9,247.5L446.6,247.5L449.3,247.5L452.1,245.7L454.8,246.8L457.6,247.5L460.3,247.5L463.0,245.2L465.8,247.5L468.5,246.9L471.3,247.5L474.0,245.6L476.7,247.0L479.5,247.5L482.2,247.5L485.0,245.6L487.7,247.5L490.4,247.5L493.2,247.5L495.9,246.0L498.7,247.5L501.4,246.8L504.1,246.2L506.9,246.4L509.6,247.5L512.4,247.4L515.1,247.2L517.8,245.2L520.6,247.5L523.3,246.3L526.1,246.7L528.8,245.9L531.5,247.5L534.3,247.0L537.0,163.9L539.8,247.5L542.5,247.5L545.2,247.3L548.0,246.6L550.7,247.5L553.5,247.5L556.2,245.6L558.9,247.5L561.7,246.6L564.4,245.8L567.2,245.8L569.9,246.9L572.6,247.5L575.4,247.5L578.1,246.5L580.9,245.4L583.6,247.5L586.3,245.3L589.1,247.5L591.8,246.4L594.6,245.5L597.3,247.5L600.0,247.5L602.8,247.5L605.5,247.5L608.3,247.5L611.0,247.5L613.7,246.1L616.5,247.2L619.2,247.5L622.0,247.3L624.7,245.4L627.4,247.4L630.2,247.5L632.9,245.5L635.7,247.5L638.4,247.5L641.1,247.5L643.9,247.5L646.6,247.5L649.4,245.7L652.1,247.5L654.8,247.5L657.6,245.7L660.3,247.5L663.1,246.7L665.8,247.5L668.5,247.5L671.3,247.1L674.0,246.0L676.8,238.6L679.5,246.6L682.2,246.7L685.0,247.3L687.7,247.5L690.5,247.5L693.2,245.7L695.9,245.8L698.7,247.5L701.4,247.5L704.2,247.5L706.9,246.0L709.6,206.4L712.4,206.4L715.1,247.5L717.9,247.5L720.6,247.5L723.3,245.8L726.1,246.9L728.8,246.1L731.6,246.9L734.3,247.5L737.0,247.5L739.8,245.8L742.5,245.5L745.3,247.5L748.0,247.0L750.7,246.3L753.5,247.1L756.2,246.7L759.0,247.5L761.7,245.1L764.4,246.1L767.2,245.5L769.9,247.5L772.7,247.5L775.4,245.8L778.1,247.5L780.9,245.7L783.6,247.5L786.4,246.9L789.1,245.8L791.8,247.5L794.6,247.5L797.3,247.5L800.1,247.0L802.8,247.1L805.5,247.5L808.3,247.5L811.0,247.5L813.8,245.4L816.5,246.5L819.2,247.5L822.0,247.3L824.7,247.5L827.5,246.6L830.2,247.5L832.9,247.5L835.7,246.7L838.4,246.3L841.2,246.1L843.9,247.5L846.6,246.2L849.4,246.8L852.1,247.5L854.9,245.4L857.6,247.5L860.3,245.2L863.1,245.6L865.8,247.5L868.6,245.9L871.3,247.5L874.0,247.5L876.8,245.7L879.5,247.5L882.3,247.5L885.0,247.5L887.7,246.3L890.5,245.8L893.2,247.5L896.0,247.5L898.7,246.0L901.4,247.5L904.2,245.4L906.9,247.5L909.7,245.3L912.4,246.7L915.1,247.5L917.9,247.5L920.6,247.5L923.4,247.5L926.1,246.8L928.8,247.3L931.6,247.5L934.3,247.5L937.1,247.5L939.8,247.5L942.5,246.9L945.3,244.1L948.0,246.3L950.8,245.7L953.5,246.7L956.2,246.2L959.0,247.5L961.7,245.5L964.5,246.9L967.2,247.2L969.9,247.5L972.7,247.5L975.4,247.0L978.2,245.7L980.9,247.5L983.6,247.5L986.4,247.5L989.1,246.5L991.9,246.2L994.6,247.5L997.3,246.9L1000.1,247.5L1002.8,245.6L1005.6,247.5L1008.3,247.5L1011.0,246.2L1013.8,247.5L1016.5,247.5L1019.3,247.5L1022.0,247.5L1024.7,245.4L1027.5,246.1L1030.2,247.5L1033.0,245.7L1035.7,247.5L1038.4,246.2L1041.2,247.0L1043.9,247.5L1046.7,246.3" fill="none" stroke="#6ed0e0" stroke-width="1" stroke-linejoin="round"/><text x="57.5" y="50" text-anchor="end">150 ms</text><text x="57.5" y="117" text-anchor="end">100 ms</text><text x="57.5" y="184" text-anchor="end">50 ms</text><text x="57.5" y="251" text-anchor="end">0 ns</text><text class="xl" x="89.7" y="266" text-anchor="middle">08:40</text><text class="xl" x="144.5" y="266" text-anchor="middle">08:50</text><text class="xl" x="199.3" y="266" text-anchor="middle">09:00</text><text class="xl" x="254.2" y="266" text-anchor="middle">09:10</text><text class="xl" x="309.0" y="266" text-anchor="middle">09:20</text><text class="xl" x="363.8" y="266" text-anchor="middle">09:30</text><text class="xl" x="418.6" y="266" text-anchor="middle">09:40</text><text class="xl" x="473.5" y="266" text-anchor="middle">09:50</text><text class="xl" x="528.3" y="266" text-anchor="middle">10:00</text><text class="xl" x="583.1" y="266" text-anchor="middle">10:10</text><text class="xl" x="637.9" y="266" text-anchor="middle">10:20</text><text class="xl" x="692.8" y="266" text-anchor="middle">10:30</text><text class="xl" x="747.6" y="266" text-anchor="middle">10:40</text><text class="xl" x="802.4" y="266" text-anchor="middle">10:50</text><text class="xl" x="857.2" y="266" text-anchor="middle">11:00</text><text class="xl" x="912.1" y="266" text-anchor="middle">11:10</text><text class="xl" x="966.9" y="266" text-anchor="middle">11:20</text><text class="xl" x="1021.7" y="266" text-anchor="middle">11:30</text><rect x="1238" y="47" width="899" height="1" fill="rgba(200,200,200,0.22)"/><rect x="1238" y="97" width="899" height="1" fill="rgba(200,200,200,0.22)"/><rect x="1238" y="148" width="899" height="1" fill="rgba(200,200,200,0.22)"/><rect x="1238" y="198" width="899" height="1" fill="rgba(200,200,200,0.22)"/><rect x="1238" y="248" width="899" height="1" fill="rgba(200,200,200,0.22)"/><rect x="1263.00" y="47" width="1" height="201" fill="rgba(200,200,200,0.22)"/><rect x="1312.94" y="47" width="1" height="201" fill="rgba(200,200,200,0.22)"/><rect x="1362.88" y="47" width="1" height="201" fill="rgba(200,200,200,0.22)"/><rect x="1412.82" y="47" width="1" height="201" fill="rgba(200,200,200,0.22)"/><rect x="1462.76" y="47" width="1" height="201" fill="rgba(200,200,200,0.22)"/><rect x="1512.70" y="47" width="1" height="201" fill="rgba(200,200,200,0.22)"/><rect x="1562.64" y="47" width="1" height="201" fill="rgba(200,200,200,0.22)"/><rect x="1612.58" y="47" width="1" height="201" fill="rgba(200,200,200,0.22)"/><rect x="1662.52" y="47" width="1" height="201" fill="rgba(200,200,200,0.22)"/><rect x="1712.46" y="47" width="1" height="201" fill="rgba(200,200,200,0.22)"/><rect x="1762.40" y="47" width="1" height="201" fill="rgba(200,200,200,0.22)"/><rect x="1812.34" y="47" width="1" height="201" fill="rgba(200,200,200,0.22)"/><rect x="1862.28" y="47" width="1" height="201" fill="rgba(200,200,200,0.22)"/><rect x="1912.22" y="47" width="1" height="201" fill="rgba(200,200,200,0.22)"/><rect x="1962.16" y="47" width="1" height="201" fill="rgba(200,200,200,0.22)"/><rect x="2012.10" y="47" width="1" height="201" fill="rgba(200,200,200,0.22)"/><rect x="2062.04" y="47" width="1" height="201" fill="rgba(200,200,200,0.22)"/><rect x="2111.98" y="47" width="1" height="201" fill="rgba(200,200,200,0.22)"/><path d="M1238.0,248.7L1315.6,248.7L1318.6,246.0L1321.6,248.7L1331.1,248.7L1333.6,247.0L1336.1,248.7L1372.0,248.7L1375.0,247.5L1378.0,248.7L1386.5,248.7L1389.5,246.0L1392.5,248.7L1395.3,248.7L1398.3,244.0L1401.3,248.7L1405.6,248.7L1408.6,245.4L1411.6,248.7L1418.3,248.7L1420.8,247.3L1423.3,248.7L1448.3,248.7L1450.8,247.3L1453.3,248.7L1498.0,248.7L1500.5,247.3L1503.0,248.7L1513.0,248.7L1515.5,246.8L1518.0,248.7L1525.0,248.7L1527.7,234.7L1531.3,234.7L1534.0,248.7L1535.5,248.7L1538.0,245.0L1540.5,248.7L1547.0,248.7L1550.0,244.0L1553.0,248.7L1568.3,248.7L1570.8,247.3L1573.3,248.7L1583.0,248.7L1586.0,245.5L1589.0,248.7L1591.0,248.7L1594.0,245.5L1597.0,248.7L1638.5,248.7L1643.0,243.1L1647.5,248.7L1671.8,248.7L1674.8,244.0L1677.8,248.7L1697.5,248.7L1700.0,247.0L1702.5,248.7L1731.7,248.7L1734.7,245.0L1737.7,248.7L1756.0,248.7L1759.0,244.0L1762.0,248.7L1771.0,248.7L1773.0,247.0L1775.0,248.7L1796.0,248.7L1798.5,245.0L1801.0,248.7L1802.0,248.7L1805.0,243.1L1808.0,248.7L1814.2,248.7L1817.2,243.1L1820.2,248.7L1824.5,248.7L1828.0,245.0L1831.5,248.7L1841.5,248.7L1843.5,247.3L1845.5,248.7L1863.0,248.7L1865.0,247.3L1867.0,248.7L1872.4,248.7L1875.4,245.0L1878.4,248.7L1882.0,248.7L1886.0,246.5L1890.0,248.7L1901.0,248.7L1903.5,247.3L1906.0,248.7L1931.6,248.7L1934.4,227.2L1938.2,227.2L1941.0,248.7L1962.3,248.7L1965.3,240.3L1968.3,248.7L1987.0,248.7L1990.0,246.0L1993.0,248.7L1994.2,248.7L1997.2,243.1L2000.2,248.7L2002.7,248.7L2004.7,245.0L2006.7,248.7L2047.6,248.7L2050.6,245.5L2053.6,248.7L2057.0,248.7L2060.0,243.5L2063.0,248.7L2066.4,248.7L2069.4,243.5L2072.4,248.7L2084.7,248.7L2087.2,236.0L2089.7,248.7L2097.2,248.7L2099.4,231.9L2101.6,248.7L2103.0,248.7L2106.0,243.0L2109.0,248.7L2112.8,248.7L2115.3,247.0L2117.8,248.7L2120.3,248.7L2122.8,247.0L2125.3,248.7L2130.0,248.7L2136.0,242.0" fill="none" stroke="#6ed0e0" stroke-width="2" stroke-linejoin="round"/><path d="M1238.0,248.7L1238.0,248.7L1689.0,248.7L1693.4,222.6L1697.5,75.2L1701.0,72.8L1703.6,78.9L1705.6,51.6L1708.0,59.4L1710.4,71.0L1713.8,69.1L1717.7,69.8L1720.7,67.4L1723.1,71.5L1726.0,82.5L1730.0,225.0L1732.8,248.7L1755.6,248.7L1759.1,240.3L1762.6,248.7L1793.1,248.7L1796.6,239.4L1800.1,248.7L1915.6,248.7L1920.0,236.0L1924.4,248.7L2008.5,248.7L2012.0,236.6L2015.0,240.0L2018.0,236.6L2021.6,248.7L2088.5,248.7L2091.5,239.4L2094.5,248.7L2137.0,248.7L2137.0,248.7Z" fill="#705da0" fill-opacity="0.1" stroke="none"/><path d="M1238.0,248.7L1689.0,248.7L1693.4,222.6L1697.5,75.2L1701.0,72.8L1703.6,78.9L1705.6,51.6L1708.0,59.4L1710.4,71.0L1713.8,69.1L1717.7,69.8L1720.7,67.4L1723.1,71.5L1726.0,82.5L1730.0,225.0L1732.8,248.7L1755.6,248.7L1759.1,240.3L1762.6,248.7L1793.1,248.7L1796.6,239.4L1800.1,248.7L1915.6,248.7L1920.0,236.0L1924.4,248.7L2008.5,248.7L2012.0,236.6L2015.0,240.0L2018.0,236.6L2021.6,248.7L2088.5,248.7L2091.5,239.4L2094.5,248.7L2137.0,248.7" fill="none" stroke="#705da0" stroke-width="2" stroke-linejoin="round"/><rect x="1691" y="248" width="40" height="2" fill="#ba43a9"/><rect x="1756" y="248" width="6" height="2" fill="#ba43a9"/><rect x="1793" y="248" width="7" height="2" fill="#ba43a9"/><rect x="1916" y="248" width="8" height="2" fill="#ba43a9"/><rect x="2009" y="248" width="12" height="2" fill="#ba43a9"/><rect x="2088" y="248" width="6" height="2" fill="#ba43a9"/><text x="1231.5" y="50" text-anchor="end">8</text><text x="1231.5" y="100" text-anchor="end">6</text><text x="1231.5" y="151" text-anchor="end">4</text><text x="1231.5" y="201" text-anchor="end">2</text><text x="1231.5" y="251" text-anchor="end">0</text><text class="xl" x="1262.7" y="266" text-anchor="middle">08:40</text><text class="xl" x="1312.6" y="266" text-anchor="middle">08:50</text><text class="xl" x="1362.6" y="266" text-anchor="middle">09:00</text><text class="xl" x="1412.5" y="266" text-anchor="middle">09:10</text><text class="xl" x="1462.5" y="266" text-anchor="middle">09:20</text><text class="xl" x="1512.4" y="266" text-anchor="middle">09:30</text><text class="xl" x="1562.3" y="266" text-anchor="middle">09:40</text><text class="xl" x="1612.3" y="266" text-anchor="middle">09:50</text><text class="xl" x="1662.2" y="266" text-anchor="middle">10:00</text><text class="xl" x="1712.2" y="266" text-anchor="middle">10:10</text><text class="xl" x="1762.1" y="266" text-anchor="middle">10:20</text><text class="xl" x="1812.0" y="266" text-anchor="middle">10:30</text><text class="xl" x="1862.0" y="266" text-anchor="middle">10:40</text><text class="xl" x="1911.9" y="266" text-anchor="middle">10:50</text><text class="xl" x="1961.9" y="266" text-anchor="middle">11:00</text><text class="xl" x="2011.8" y="266" text-anchor="middle">11:10</text><text class="xl" x="2061.7" y="266" text-anchor="middle">11:20</text><text class="xl" x="2111.7" y="266" text-anchor="middle">11:30</text><rect x="43" y="367" width="907" height="1" fill="rgba(200,200,200,0.22)"/><rect x="43" y="427" width="907" height="1" fill="rgba(200,200,200,0.22)"/><rect x="43" y="488" width="907" height="1" fill="rgba(200,200,200,0.22)"/><rect x="43" y="548" width="907" height="1" fill="rgba(200,200,200,0.22)"/><rect x="43" y="609" width="907" height="1" fill="rgba(200,200,200,0.22)"/><rect x="68.00" y="367" width="1" height="242" fill="rgba(200,200,200,0.22)"/><rect x="118.41" y="367" width="1" height="242" fill="rgba(200,200,200,0.22)"/><rect x="168.82" y="367" width="1" height="242" fill="rgba(200,200,200,0.22)"/><rect x="219.23" y="367" width="1" height="242" fill="rgba(200,200,200,0.22)"/><rect x="269.64" y="367" width="1" height="242" fill="rgba(200,200,200,0.22)"/><rect x="320.05" y="367" width="1" height="242" fill="rgba(200,200,200,0.22)"/><rect x="370.46" y="367" width="1" height="242" fill="rgba(200,200,200,0.22)"/><rect x="420.87" y="367" width="1" height="242" fill="rgba(200,200,200,0.22)"/><rect x="471.28" y="367" width="1" height="242" fill="rgba(200,200,200,0.22)"/><rect x="521.69" y="367" width="1" height="242" fill="rgba(200,200,200,0.22)"/><rect x="572.10" y="367" width="1" height="242" fill="rgba(200,200,200,0.22)"/><rect x="622.51" y="367" width="1" height="242" fill="rgba(200,200,200,0.22)"/><rect x="672.92" y="367" width="1" height="242" fill="rgba(200,200,200,0.22)"/><rect x="723.33" y="367" width="1" height="242" fill="rgba(200,200,200,0.22)"/><rect x="773.74" y="367" width="1" height="242" fill="rgba(200,200,200,0.22)"/><rect x="824.15" y="367" width="1" height="242" fill="rgba(200,200,200,0.22)"/><rect x="874.56" y="367" width="1" height="242" fill="rgba(200,200,200,0.22)"/><rect x="924.97" y="367" width="1" height="242" fill="rgba(200,200,200,0.22)"/><rect x="43" y="399" width="905" height="1" fill="#a8c48a" opacity="0.75"/><rect x="43" y="400" width="905" height="1" fill="#6ed0e0" opacity="0.85"/><text x="37" y="370" text-anchor="end">8 K</text><text x="37" y="430" text-anchor="end">6 K</text><text x="37" y="491" text-anchor="end">4 K</text><text x="37" y="551" text-anchor="end">2 K</text><text x="37" y="612" text-anchor="end">0</text><text class="xl" x="67.7" y="626" text-anchor="middle">08:40</text><text class="xl" x="118.1" y="626" text-anchor="middle">08:50</text><text class="xl" x="168.5" y="626" text-anchor="middle">09:00</text><text class="xl" x="218.9" y="626" text-anchor="middle">09:10</text><text class="xl" x="269.3" y="626" text-anchor="middle">09:20</text><text class="xl" x="319.7" y="626" text-anchor="middle">09:30</text><text class="xl" x="370.2" y="626" text-anchor="middle">09:40</text><text class="xl" x="420.6" y="626" text-anchor="middle">09:50</text><text class="xl" x="471.0" y="626" text-anchor="middle">10:00</text><text class="xl" x="521.4" y="626" text-anchor="middle">10:10</text><text class="xl" x="571.8" y="626" text-anchor="middle">10:20</text><text class="xl" x="622.2" y="626" text-anchor="middle">10:30</text><text class="xl" x="672.6" y="626" text-anchor="middle">10:40</text><text class="xl" x="723.0" y="626" text-anchor="middle">10:50</text><text class="xl" x="773.4" y="626" text-anchor="middle">11:00</text><text class="xl" x="823.9" y="626" text-anchor="middle">11:10</text><text class="xl" x="874.3" y="626" text-anchor="middle">11:20</text><text class="xl" x="924.7" y="626" text-anchor="middle">11:30</text><rect x="1273" y="367" width="866" height="1" fill="rgba(200,200,200,0.22)"/><rect x="1273" y="401" width="866" height="1" fill="rgba(200,200,200,0.22)"/><rect x="1273" y="436" width="866" height="1" fill="rgba(200,200,200,0.22)"/><rect x="1273" y="470" width="866" height="1" fill="rgba(200,200,200,0.22)"/><rect x="1273" y="505" width="866" height="1" fill="rgba(200,200,200,0.22)"/><rect x="1273" y="539" width="866" height="1" fill="rgba(200,200,200,0.22)"/><rect x="1273" y="574" width="866" height="1" fill="rgba(200,200,200,0.22)"/><rect x="1273" y="609" width="866" height="1" fill="rgba(200,200,200,0.22)"/><rect x="1297.00" y="367" width="1" height="242" fill="rgba(200,200,200,0.22)"/><rect x="1345.12" y="367" width="1" height="242" fill="rgba(200,200,200,0.22)"/><rect x="1393.24" y="367" width="1" height="242" fill="rgba(200,200,200,0.22)"/><rect x="1441.36" y="367" width="1" height="242" fill="rgba(200,200,200,0.22)"/><rect x="1489.48" y="367" width="1" height="242" fill="rgba(200,200,200,0.22)"/><rect x="1537.60" y="367" width="1" height="242" fill="rgba(200,200,200,0.22)"/><rect x="1585.72" y="367" width="1" height="242" fill="rgba(200,200,200,0.22)"/><rect x="1633.84" y="367" width="1" height="242" fill="rgba(200,200,200,0.22)"/><rect x="1681.96" y="367" width="1" height="242" fill="rgba(200,200,200,0.22)"/><rect x="1730.08" y="367" width="1" height="242" fill="rgba(200,200,200,0.22)"/><rect x="1778.20" y="367" width="1" height="242" fill="rgba(200,200,200,0.22)"/><rect x="1826.32" y="367" width="1" height="242" fill="rgba(200,200,200,0.22)"/><rect x="1874.44" y="367" width="1" height="242" fill="rgba(200,200,200,0.22)"/><rect x="1922.56" y="367" width="1" height="242" fill="rgba(200,200,200,0.22)"/><rect x="1970.68" y="367" width="1" height="242" fill="rgba(200,200,200,0.22)"/><rect x="2018.80" y="367" width="1" height="242" fill="rgba(200,200,200,0.22)"/><rect x="2066.92" y="367" width="1" height="242" fill="rgba(200,200,200,0.22)"/><rect x="2115.04" y="367" width="1" height="242" fill="rgba(200,200,200,0.22)"/><path d="M1273.0,512.5L1275.4,512.5L1277.8,512.5L1280.2,512.5L1282.6,512.5L1285.0,528.7L1287.4,519.4L1289.8,519.4L1292.2,519.4L1294.6,546.8L1297.0,512.5L1299.4,512.5L1301.8,512.5L1304.2,512.5L1306.6,512.5L1309.0,512.5L1311.4,512.5L1313.8,576.3L1316.2,512.5L1318.6,520.1L1321.0,520.1L1323.4,512.5L1325.8,512.5L1328.2,512.5L1330.6,512.5L1333.0,534.4L1335.4,512.5L1337.8,512.5L1340.2,526.3L1342.6,526.3L1345.0,598.4L1347.4,547.6L1349.8,533.8L1352.2,550.0L1354.6,533.8L1357.0,533.8L1359.4,553.0L1361.8,520.1L1364.2,520.1L1366.6,523.5L1369.0,520.1L1371.4,519.4L1373.8,577.6L1376.2,519.4L1378.6,533.2L1381.0,526.3L1383.4,526.3L1385.8,526.3L1388.2,519.4L1390.6,519.4L1393.0,537.1L1395.4,519.4L1397.8,519.4L1400.2,519.4L1402.6,519.4L1405.0,519.4L1407.4,519.4L1409.8,519.4L1412.2,512.5L1414.6,512.5L1417.0,512.5L1419.4,505.6L1421.8,505.6L1424.2,547.4L1426.6,526.3L1429.0,505.6L1431.4,505.6L1433.8,505.6L1436.2,498.7L1438.6,498.7L1441.0,498.7L1443.4,498.7L1445.8,498.7L1448.2,498.7L1450.6,512.8L1453.0,498.7L1455.4,498.7L1457.8,498.7L1460.2,498.7L1462.6,498.7L1465.0,498.7L1467.4,498.7L1469.8,498.7L1472.2,498.7L1474.6,505.6L1477.0,510.8L1479.4,512.5L1481.8,498.7L1484.2,498.7L1486.6,498.7L1489.0,498.7L1491.4,498.7L1493.8,515.2L1496.2,512.5L1498.6,505.6L1501.0,579.5L1503.4,505.6L1505.8,505.6L1508.2,505.6L1510.6,505.6L1513.0,505.6L1515.4,545.1L1517.8,505.6L1520.2,512.5L1522.6,514.6L1525.0,512.5L1527.4,512.5L1529.8,512.5L1532.2,540.9L1534.6,512.5L1537.0,512.5L1539.4,512.5L1541.8,519.4L1544.2,512.5L1546.6,512.5L1549.0,512.5L1551.4,512.5L1553.8,512.5L1556.2,515.6L1558.6,512.5L1561.0,543.2L1563.4,519.4L1565.8,566.5L1568.2,519.4L1570.6,519.4L1573.0,526.3L1575.4,526.3L1577.8,519.4L1580.2,519.4L1582.6,553.1L1585.0,540.0L1587.4,519.4L1589.8,519.4L1592.2,519.4L1594.6,519.4L1597.0,546.7L1599.4,519.4L1601.8,512.5L1604.2,512.5L1606.6,593.1L1609.0,505.6L1611.4,505.6L1613.8,517.1L1616.2,505.6L1618.6,505.6L1621.0,505.6L1623.4,521.5L1625.8,505.6L1628.2,512.5L1630.6,518.3L1633.0,505.6L1635.4,505.6L1637.8,505.6L1640.2,512.5L1642.6,505.6L1645.0,505.6L1647.4,505.6L1649.8,505.6L1652.2,505.6L1654.6,505.6L1657.0,505.6L1659.4,505.6L1661.8,550.3L1664.2,505.6L1666.6,505.6L1669.0,512.5L1671.4,505.6L1673.8,512.5L1676.2,522.1L1678.6,505.6L1681.0,505.6L1683.4,505.6L1685.8,505.6L1688.2,505.6L1690.6,505.6L1693.0,548.7L1695.4,505.6L1697.8,505.6L1700.2,546.4L1702.6,505.6L1705.0,498.7L1707.4,498.7L1709.8,498.7L1712.2,498.7L1714.6,498.7L1717.0,520.7L1719.4,498.7L1721.8,491.8L1724.2,491.8L1726.6,498.7L1729.0,491.8L1731.4,491.8L1733.8,498.7L1736.2,498.7L1738.6,515.0L1741.0,491.8L1743.4,491.8L1745.8,491.8L1748.2,491.8L1750.6,501.2L1753.0,491.8L1755.4,491.8L1757.8,491.8L1760.2,491.8L1762.6,492.7L1765.0,491.8L1767.4,512.5L1769.8,485.0L1772.2,491.8L1774.6,491.8L1777.0,485.0L1779.4,485.0L1781.8,491.8L1784.2,491.8L1786.6,491.8L1789.0,509.3L1791.4,491.8L1793.8,485.0L1796.2,574.3L1798.6,485.0L1801.0,485.0L1803.4,485.0L1805.8,485.0L1808.2,526.0L1810.6,485.0L1813.0,485.0L1815.4,491.8L1817.8,505.5L1820.2,491.8L1822.6,507.4L1825.0,491.8L1827.4,498.7L1829.8,527.9L1832.2,498.7L1834.6,519.4L1837.0,498.7L1839.4,524.3L1841.8,491.8L1844.2,491.8L1846.6,523.3L1849.0,491.8L1851.4,491.8L1853.8,491.8L1856.2,491.8L1858.6,525.2L1861.0,491.8L1863.4,491.8L1865.8,491.8L1868.2,524.8L1870.6,491.8L1873.0,491.8L1875.4,491.8L1877.8,491.8L1880.2,498.7L1882.6,498.7L1885.0,498.7L1887.4,498.7L1889.8,498.7L1892.2,491.8L1894.6,505.2L1897.0,491.8L1899.4,517.5L1901.8,491.8L1904.2,491.8L1906.6,498.7L1909.0,498.7L1911.4,498.7L1913.8,491.8L1916.2,491.8L1918.6,491.8L1921.0,491.8L1923.4,501.6L1925.8,498.7L1928.2,491.8L1930.6,478.1L1933.0,478.1L1935.4,478.1L1937.8,514.3L1940.2,478.1L1942.6,478.1L1945.0,478.1L1947.4,500.0L1949.8,471.2L1952.2,471.2L1954.6,471.2L1957.0,496.2L1959.4,471.2L1961.8,471.2L1964.2,478.1L1966.6,478.1L1969.0,478.1L1971.4,526.5L1973.8,478.1L1976.2,478.1L1978.6,478.1L1981.0,478.1L1983.4,478.1L1985.8,478.1L1988.2,478.1L1990.6,478.1L1993.0,493.9L1995.4,485.0L1997.8,478.1L2000.2,478.1L2002.6,478.1L2005.0,503.0L2007.4,478.1L2009.8,478.1L2012.2,524.6L2014.6,478.1L2017.0,478.1L2019.4,485.0L2021.8,471.2L2024.2,493.2L2026.6,478.1L2029.0,471.2L2031.4,471.2L2033.8,471.2L2036.2,471.2L2038.6,499.8L2041.0,471.2L2043.4,471.2L2045.8,471.2L2048.2,471.2L2050.6,477.7L2053.0,471.2L2055.4,471.2L2057.8,464.3L2060.2,464.3L2062.6,457.4L2065.0,482.8L2067.4,457.4L2069.8,457.4L2072.2,499.6L2074.6,443.6L2077.0,443.6L2079.4,443.6L2081.8,443.6L2084.2,443.6L2086.6,443.6L2089.0,532.7L2091.4,443.6L2093.8,450.5L2096.2,429.9L2098.6,443.6L2101.0,452.4L2103.4,429.9L2105.8,440.9L2108.2,429.9L2110.6,429.9L2113.0,423.0L2115.4,423.0L2117.8,457.0L2120.2,451.9L2122.6,423.0L2125.0,423.0L2127.4,423.0L2129.8,402.3L2132.2,402.3L2134.6,413.5L2137.0,426.4" fill="none" stroke="#7eb26d" stroke-width="1" stroke-linejoin="round"/><path d="M1273.0,512.5L1275.4,512.5L1277.8,512.5L1280.2,512.5L1282.6,512.5L1285.0,525.2L1287.4,519.4L1289.8,519.4L1292.2,519.4L1294.6,538.4L1297.0,512.5L1299.4,512.5L1301.8,533.2L1304.2,512.5L1306.6,512.5L1309.0,512.5L1311.4,512.5L1313.8,566.2L1316.2,512.5L1318.6,520.1L1321.0,520.1L1323.4,512.5L1325.8,512.5L1328.2,512.5L1330.6,512.5L1333.0,516.2L1335.4,512.5L1337.8,512.5L1340.2,512.5L1342.6,526.3L1345.0,611.3L1347.4,547.6L1349.8,533.8L1352.2,554.2L1354.6,533.8L1357.0,533.8L1359.4,565.1L1361.8,520.1L1364.2,520.1L1366.6,538.4L1369.0,533.8L1371.4,519.4L1373.8,572.6L1376.2,519.4L1378.6,519.4L1381.0,526.3L1383.4,526.3L1385.8,526.3L1388.2,519.4L1390.6,519.4L1393.0,554.4L1395.4,519.4L1397.8,519.4L1400.2,519.4L1402.6,519.4L1405.0,519.4L1407.4,519.4L1409.8,519.4L1412.2,512.5L1414.6,512.5L1417.0,512.5L1419.4,505.6L1421.8,505.6L1424.2,552.0L1426.6,533.2L1429.0,505.6L1431.4,505.6L1433.8,505.6L1436.2,498.7L1438.6,498.7L1441.0,505.6L1443.4,498.7L1445.8,498.7L1448.2,498.7L1450.6,514.2L1453.0,498.7L1455.4,505.6L1457.8,498.7L1460.2,498.7L1462.6,498.7L1465.0,498.7L1467.4,498.7L1469.8,498.7L1472.2,498.7L1474.6,505.6L1477.0,528.0L1479.4,498.7L1481.8,498.7L1484.2,498.7L1486.6,498.7L1489.0,498.7L1491.4,498.7L1493.8,532.5L1496.2,498.7L1498.6,505.6L1501.0,584.9L1503.4,505.6L1505.8,505.6L1508.2,505.6L1510.6,505.6L1513.0,526.3L1515.4,548.0L1517.8,505.6L1520.2,512.5L1522.6,535.0L1525.0,512.5L1527.4,512.5L1529.8,512.5L1532.2,526.4L1534.6,519.4L1537.0,512.5L1539.4,512.5L1541.8,512.5L1544.2,512.5L1546.6,512.5L1549.0,531.5L1551.4,512.5L1553.8,512.5L1556.2,536.4L1558.6,512.5L1561.0,533.6L1563.4,519.4L1565.8,560.9L1568.2,519.4L1570.6,519.4L1573.0,526.3L1575.4,526.3L1577.8,519.4L1580.2,519.4L1582.6,562.4L1585.0,519.4L1587.4,519.4L1589.8,519.4L1592.2,519.4L1594.6,519.4L1597.0,546.3L1599.4,519.4L1601.8,512.5L1604.2,512.5L1606.6,570.9L1609.0,505.6L1611.4,505.6L1613.8,534.6L1616.2,505.6L1618.6,505.6L1621.0,505.6L1623.4,516.9L1625.8,505.6L1628.2,512.5L1630.6,518.4L1633.0,505.6L1635.4,505.6L1637.8,505.6L1640.2,512.5L1642.6,505.6L1645.0,505.6L1647.4,505.6L1649.8,505.6L1652.2,505.6L1654.6,505.6L1657.0,505.6L1659.4,505.6L1661.8,540.5L1664.2,505.6L1666.6,505.6L1669.0,512.5L1671.4,505.6L1673.8,505.6L1676.2,515.0L1678.6,505.6L1681.0,505.6L1683.4,505.6L1685.8,519.4L1688.2,505.6L1690.6,505.6L1693.0,547.9L1695.4,505.6L1697.8,505.6L1700.2,523.5L1702.6,505.6L1705.0,498.7L1707.4,498.7L1709.8,498.7L1712.2,498.7L1714.6,498.7L1717.0,516.9L1719.4,498.7L1721.8,491.8L1724.2,491.8L1726.6,498.7L1729.0,491.8L1731.4,491.8L1733.8,498.7L1736.2,498.7L1738.6,522.9L1741.0,491.8L1743.4,491.8L1745.8,491.8L1748.2,491.8L1750.6,522.5L1753.0,491.8L1755.4,498.7L1757.8,491.8L1760.2,491.8L1762.6,517.3L1765.0,491.8L1767.4,505.6L1769.8,485.0L1772.2,491.8L1774.6,491.8L1777.0,485.0L1779.4,485.0L1781.8,491.8L1784.2,491.8L1786.6,491.8L1789.0,494.0L1791.4,498.7L1793.8,485.0L1796.2,580.2L1798.6,485.0L1801.0,485.0L1803.4,485.0L1805.8,485.0L1808.2,528.4L1810.6,485.0L1813.0,485.0L1815.4,491.8L1817.8,511.4L1820.2,491.8L1822.6,513.0L1825.0,491.8L1827.4,498.7L1829.8,514.1L1832.2,505.6L1834.6,526.3L1837.0,498.7L1839.4,511.9L1841.8,491.8L1844.2,491.8L1846.6,510.4L1849.0,498.7L1851.4,491.8L1853.8,491.8L1856.2,491.8L1858.6,521.3L1861.0,491.8L1863.4,491.8L1865.8,491.8L1868.2,528.4L1870.6,491.8L1873.0,491.8L1875.4,491.8L1877.8,491.8L1880.2,498.7L1882.6,498.7L1885.0,498.7L1887.4,498.7L1889.8,498.7L1892.2,491.8L1894.6,496.5L1897.0,491.8L1899.4,529.2L1901.8,491.8L1904.2,491.8L1906.6,498.7L1909.0,498.7L1911.4,498.7L1913.8,491.8L1916.2,498.7L1918.6,491.8L1921.0,491.8L1923.4,493.1L1925.8,491.8L1928.2,491.8L1930.6,478.1L1933.0,478.1L1935.4,485.0L1937.8,504.8L1940.2,478.1L1942.6,478.1L1945.0,478.1L1947.4,498.8L1949.8,471.2L1952.2,471.2L1954.6,471.2L1957.0,513.6L1959.4,471.2L1961.8,471.2L1964.2,478.1L1966.6,478.1L1969.0,478.1L1971.4,532.3L1973.8,478.1L1976.2,478.1L1978.6,478.1L1981.0,478.1L1983.4,478.1L1985.8,478.1L1988.2,478.1L1990.6,478.1L1993.0,504.2L1995.4,478.1L1997.8,478.1L2000.2,478.1L2002.6,478.1L2005.0,491.5L2007.4,478.1L2009.8,485.0L2012.2,517.8L2014.6,478.1L2017.0,478.1L2019.4,491.8L2021.8,471.2L2024.2,516.8L2026.6,471.2L2029.0,471.2L2031.4,491.8L2033.8,471.2L2036.2,471.2L2038.6,507.2L2041.0,471.2L2043.4,471.2L2045.8,471.2L2048.2,471.2L2050.6,475.6L2053.0,471.2L2055.4,471.2L2057.8,464.3L2060.2,464.3L2062.6,471.2L2065.0,481.4L2067.4,457.4L2069.8,457.4L2072.2,497.9L2074.6,443.6L2077.0,443.6L2079.4,443.6L2081.8,443.6L2084.2,443.6L2086.6,443.6L2089.0,539.9L2091.4,443.6L2093.8,443.6L2096.2,429.9L2098.6,429.9L2101.0,437.9L2103.4,429.9L2105.8,434.8L2108.2,429.9L2110.6,429.9L2113.0,423.0L2115.4,423.0L2117.8,435.8L2120.2,467.7L2122.6,423.0L2125.0,423.0L2127.4,423.0L2129.8,402.3L2132.2,402.3L2134.6,431.0L2137.0,412.6" fill="none" stroke="#eab839" stroke-width="1" stroke-linejoin="round"/><path d="M1273.0,512.5L1275.4,512.5L1277.8,512.5L1280.2,512.5L1282.6,512.5L1285.0,526.3L1287.4,519.4L1289.8,519.4L1292.2,519.4L1294.6,547.6L1297.0,512.5L1299.4,512.5L1301.8,512.5L1304.2,512.5L1306.6,512.5L1309.0,512.5L1311.4,512.5L1313.8,566.9L1316.2,512.5L1318.6,520.1L1321.0,520.1L1323.4,512.5L1325.8,512.5L1328.2,512.5L1330.6,512.5L1333.0,526.3L1335.4,512.5L1337.8,512.5L1340.2,519.4L1342.6,526.3L1345.0,602.0L1347.4,547.6L1349.8,533.8L1352.2,553.8L1354.6,533.8L1357.0,533.8L1359.4,553.8L1361.8,520.1L1364.2,520.1L1366.6,533.2L1369.0,533.8L1371.4,519.4L1373.8,580.7L1376.2,519.4L1378.6,519.4L1381.0,526.3L1383.4,526.3L1385.8,526.3L1388.2,519.4L1390.6,519.4L1393.0,546.9L1395.4,519.4L1397.8,519.4L1400.2,519.4L1402.6,519.4L1405.0,519.4L1407.4,519.4L1409.8,519.4L1412.2,512.5L1414.6,512.5L1417.0,512.5L1419.4,505.6L1421.8,505.6L1424.2,540.0L1426.6,526.3L1429.0,505.6L1431.4,505.6L1433.8,505.6L1436.2,498.7L1438.6,498.7L1441.0,505.6L1443.4,498.7L1445.8,498.7L1448.2,498.7L1450.6,519.4L1453.0,498.7L1455.4,498.7L1457.8,498.7L1460.2,498.7L1462.6,498.7L1465.0,498.7L1467.4,498.7L1469.8,498.7L1472.2,498.7L1474.6,505.6L1477.0,519.4L1479.4,498.7L1481.8,498.7L1484.2,498.7L1486.6,498.7L1489.0,498.7L1491.4,498.7L1493.8,526.3L1496.2,505.6L1498.6,505.6L1501.0,574.5L1503.4,505.6L1505.8,505.6L1508.2,505.6L1510.6,505.6L1513.0,505.6L1515.4,540.0L1517.8,505.6L1520.2,512.5L1522.6,526.3L1525.0,512.5L1527.4,512.5L1529.8,512.5L1532.2,533.2L1534.6,512.5L1537.0,512.5L1539.4,512.5L1541.8,512.5L1544.2,512.5L1546.6,512.5L1549.0,526.3L1551.4,512.5L1553.8,512.5L1556.2,526.3L1558.6,512.5L1561.0,533.2L1563.4,519.4L1565.8,559.3L1568.2,519.4L1570.6,519.4L1573.0,526.3L1575.4,526.3L1577.8,519.4L1580.2,519.4L1582.6,559.3L1585.0,519.4L1587.4,519.4L1589.8,519.4L1592.2,519.4L1594.6,519.4L1597.0,540.0L1599.4,519.4L1601.8,512.5L1604.2,512.5L1606.6,582.0L1609.0,505.6L1611.4,505.6L1613.8,526.3L1616.2,505.6L1618.6,505.6L1621.0,505.6L1623.4,519.4L1625.8,505.6L1628.2,505.6L1630.6,526.3L1633.0,505.6L1635.4,505.6L1637.8,505.6L1640.2,512.5L1642.6,505.6L1645.0,505.6L1647.4,505.6L1649.8,505.6L1652.2,505.6L1654.6,505.6L1657.0,505.6L1659.4,512.5L1661.8,540.0L1664.2,505.6L1666.6,505.6L1669.0,512.5L1671.4,505.6L1673.8,505.6L1676.2,519.4L1678.6,505.6L1681.0,505.6L1683.4,505.6L1685.8,505.6L1688.2,505.6L1690.6,505.6L1693.0,553.8L1695.4,505.6L1697.8,505.6L1700.2,533.2L1702.6,505.6L1705.0,498.7L1707.4,505.6L1709.8,498.7L1712.2,498.7L1714.6,498.7L1717.0,512.5L1719.4,498.7L1721.8,491.8L1724.2,491.8L1726.6,498.7L1729.0,491.8L1731.4,491.8L1733.8,498.7L1736.2,498.7L1738.6,520.1L1741.0,491.8L1743.4,512.5L1745.8,491.8L1748.2,491.8L1750.6,512.5L1753.0,491.8L1755.4,498.7L1757.8,491.8L1760.2,491.8L1762.6,505.6L1765.0,491.8L1767.4,485.0L1769.8,485.0L1772.2,491.8L1774.6,491.8L1777.0,498.7L1779.4,485.0L1781.8,491.8L1784.2,491.8L1786.6,491.8L1789.0,498.7L1791.4,505.6L1793.8,485.0L1796.2,574.5L1798.6,485.0L1801.0,485.0L1803.4,498.7L1805.8,485.0L1808.2,533.2L1810.6,485.0L1813.0,485.0L1815.4,491.8L1817.8,505.6L1820.2,491.8L1822.6,512.5L1825.0,491.8L1827.4,498.7L1829.8,519.4L1832.2,498.7L1834.6,526.3L1837.0,498.7L1839.4,512.5L1841.8,491.8L1844.2,491.8L1846.6,512.5L1849.0,491.8L1851.4,491.8L1853.8,491.8L1856.2,491.8L1858.6,512.5L1861.0,491.8L1863.4,491.8L1865.8,491.8L1868.2,526.3L1870.6,491.8L1873.0,491.8L1875.4,491.8L1877.8,491.8L1880.2,498.7L1882.6,498.7L1885.0,498.7L1887.4,498.7L1889.8,498.7L1892.2,491.8L1894.6,505.6L1897.0,491.8L1899.4,519.4L1901.8,491.8L1904.2,491.8L1906.6,498.7L1909.0,498.7L1911.4,498.7L1913.8,491.8L1916.2,491.8L1918.6,491.8L1921.0,491.8L1923.4,491.8L1925.8,491.8L1928.2,491.8L1930.6,485.0L1933.0,478.1L1935.4,491.8L1937.8,505.6L1940.2,478.1L1942.6,478.1L1945.0,478.1L1947.4,491.8L1949.8,471.2L1952.2,471.2L1954.6,471.2L1957.0,505.6L1959.4,471.2L1961.8,491.8L1964.2,478.1L1966.6,478.1L1969.0,478.1L1971.4,540.0L1973.8,478.1L1976.2,478.1L1978.6,478.1L1981.0,478.1L1983.4,478.1L1985.8,478.1L1988.2,478.1L1990.6,478.1L1993.0,505.6L1995.4,478.1L1997.8,478.1L2000.2,478.1L2002.6,478.1L2005.0,491.8L2007.4,478.1L2009.8,491.8L2012.2,512.5L2014.6,478.1L2017.0,478.1L2019.4,478.1L2021.8,471.2L2024.2,505.6L2026.6,471.2L2029.0,471.2L2031.4,485.0L2033.8,471.2L2036.2,471.2L2038.6,498.7L2041.0,471.2L2043.4,471.2L2045.8,471.2L2048.2,471.2L2050.6,485.0L2053.0,471.2L2055.4,471.2L2057.8,464.3L2060.2,464.3L2062.6,471.2L2065.0,478.1L2067.4,457.4L2069.8,457.4L2072.2,498.7L2074.6,443.6L2077.0,443.6L2079.4,443.6L2081.8,443.6L2084.2,443.6L2086.6,443.6L2089.0,533.2L2091.4,443.6L2093.8,443.6L2096.2,429.9L2098.6,429.9L2101.0,450.5L2103.4,436.8L2105.8,443.6L2108.2,429.9L2110.6,429.9L2113.0,423.0L2115.4,450.5L2117.8,443.6L2120.2,457.4L2122.6,423.0L2125.0,423.0L2127.4,423.0L2129.8,402.3L2132.2,402.3L2134.6,423.0L2137.0,412.6" fill="none" stroke="#6ed0e0" stroke-width="1" stroke-linejoin="round"/><text x="1267.5" y="370" text-anchor="end">20.720 K</text><text x="1267.5" y="404" text-anchor="end">20.715 K</text><text x="1267.5" y="439" text-anchor="end">20.710 K</text><text x="1267.5" y="473" text-anchor="end">20.705 K</text><text x="1267.5" y="508" text-anchor="end">20.700 K</text><text x="1267.5" y="542" text-anchor="end">20.695 K</text><text x="1267.5" y="577" text-anchor="end">20.690 K</text><text x="1267.5" y="612" text-anchor="end">20.685 K</text><text class="xl" x="1296.7" y="626" text-anchor="middle">08:40</text><text class="xl" x="1344.8" y="626" text-anchor="middle">08:50</text><text class="xl" x="1392.9" y="626" text-anchor="middle">09:00</text><text class="xl" x="1441.1" y="626" text-anchor="middle">09:10</text><text class="xl" x="1489.2" y="626" text-anchor="middle">09:20</text><text class="xl" x="1537.3" y="626" text-anchor="middle">09:30</text><text class="xl" x="1585.4" y="626" text-anchor="middle">09:40</text><text class="xl" x="1633.5" y="626" text-anchor="middle">09:50</text><text class="xl" x="1681.7" y="626" text-anchor="middle">10:00</text><text class="xl" x="1729.8" y="626" text-anchor="middle">10:10</text><text class="xl" x="1777.9" y="626" text-anchor="middle">10:20</text><text class="xl" x="1826.0" y="626" text-anchor="middle">10:30</text><text class="xl" x="1874.1" y="626" text-anchor="middle">10:40</text><text class="xl" x="1922.3" y="626" text-anchor="middle">10:50</text><text class="xl" x="1970.4" y="626" text-anchor="middle">11:00</text><text class="xl" x="2018.5" y="626" text-anchor="middle">11:10</text><text class="xl" x="2066.6" y="626" text-anchor="middle">11:20</text><text class="xl" x="2114.7" y="626" text-anchor="middle">11:30</text><rect x="63" y="687" width="870" height="1" fill="rgba(200,200,200,0.22)"/><rect x="63" y="767" width="870" height="1" fill="rgba(200,200,200,0.22)"/><rect x="63" y="848" width="870" height="1" fill="rgba(200,200,200,0.22)"/><rect x="63" y="929" width="870" height="1" fill="rgba(200,200,200,0.22)"/><rect x="87.00" y="687" width="1" height="242" fill="rgba(200,200,200,0.22)"/><rect x="135.35" y="687" width="1" height="242" fill="rgba(200,200,200,0.22)"/><rect x="183.70" y="687" width="1" height="242" fill="rgba(200,200,200,0.22)"/><rect x="232.05" y="687" width="1" height="242" fill="rgba(200,200,200,0.22)"/><rect x="280.40" y="687" width="1" height="242" fill="rgba(200,200,200,0.22)"/><rect x="328.75" y="687" width="1" height="242" fill="rgba(200,200,200,0.22)"/><rect x="377.10" y="687" width="1" height="242" fill="rgba(200,200,200,0.22)"/><rect x="425.45" y="687" width="1" height="242" fill="rgba(200,200,200,0.22)"/><rect x="473.80" y="687" width="1" height="242" fill="rgba(200,200,200,0.22)"/><rect x="522.15" y="687" width="1" height="242" fill="rgba(200,200,200,0.22)"/><rect x="570.50" y="687" width="1" height="242" fill="rgba(200,200,200,0.22)"/><rect x="618.85" y="687" width="1" height="242" fill="rgba(200,200,200,0.22)"/><rect x="667.20" y="687" width="1" height="242" fill="rgba(200,200,200,0.22)"/><rect x="715.55" y="687" width="1" height="242" fill="rgba(200,200,200,0.22)"/><rect x="763.90" y="687" width="1" height="242" fill="rgba(200,200,200,0.22)"/><rect x="812.25" y="687" width="1" height="242" fill="rgba(200,200,200,0.22)"/><rect x="860.60" y="687" width="1" height="242" fill="rgba(200,200,200,0.22)"/><rect x="908.95" y="687" width="1" height="242" fill="rgba(200,200,200,0.22)"/><path d="M63.0,886.8L65.5,895.3L68.0,891.7L70.5,900.5L73.0,901.8L75.5,879.6L78.0,881.0L80.5,892.5L83.0,863.7L85.5,798.3L88.0,874.1L90.5,893.8L93.0,888.1L95.5,897.5L98.0,889.4L100.5,887.2L103.0,884.9L105.5,881.9L108.0,889.3L110.5,889.4L113.0,879.8L115.5,884.9L118.0,886.2L120.5,894.0L123.0,883.2L125.5,866.9L128.0,804.8L130.5,876.8L133.0,886.5L135.5,883.0L138.0,885.8L140.5,874.2L143.0,881.2L145.5,888.6L148.0,885.8L150.5,876.0L153.0,866.1L155.5,876.5L158.0,876.3L160.5,882.9L163.0,887.0L165.5,866.6L168.0,887.3L170.5,878.5L173.0,884.6L175.5,888.8L178.0,887.6L180.5,882.4L183.0,886.8L185.5,891.7L188.0,883.7L190.5,882.5L193.0,870.5L195.5,878.0L198.0,888.9L200.5,896.5L203.0,883.8L205.5,886.3L208.0,887.2L210.5,880.2L213.0,885.6L215.5,883.2L218.0,891.8L220.5,883.3L223.0,858.0L225.5,787.0L228.0,869.4L230.5,902.3L233.0,893.6L235.5,894.8L238.0,895.0L240.5,901.0L243.0,891.4L245.5,889.4L248.0,884.2L250.5,893.2L253.0,889.5L255.5,874.1L258.0,887.1L260.5,896.5L263.0,886.1L265.5,880.2L268.0,890.5L270.5,872.5L273.0,816.1L275.5,881.6L278.0,895.1L280.5,892.0L283.0,894.1L285.5,895.2L288.0,898.6L290.5,876.2L293.0,882.6L295.5,896.1L298.0,895.8L300.5,893.5L303.0,883.9L305.5,893.7L308.0,895.8L310.5,882.9L313.0,868.2L315.5,878.2L318.0,870.1L320.5,811.2L323.0,879.5L325.5,890.3L328.0,900.4L330.5,900.7L333.0,904.7L335.5,894.3L338.0,887.1L340.5,889.3L343.0,856.4L345.5,898.5L348.0,895.7L350.5,894.8L353.0,887.9L355.5,896.0L358.0,891.6L360.5,891.6L363.0,876.0L365.5,881.5L368.0,890.8L370.5,880.5L373.0,881.9L375.5,876.3L378.0,875.4L380.5,865.3L383.0,877.6L385.5,881.0L388.0,881.4L390.5,867.2L393.0,875.8L395.5,868.4L398.0,875.1L400.5,873.2L403.0,856.3L405.5,861.6L408.0,854.0L410.5,779.0L413.0,866.0L415.5,876.7L418.0,865.3L420.5,877.3L423.0,878.9L425.5,862.9L428.0,884.7L430.5,874.7L433.0,865.5L435.5,882.5L438.0,878.5L440.5,886.7L443.0,888.3L445.5,881.5L448.0,875.3L450.5,888.2L453.0,893.4L455.5,887.1L458.0,885.2L460.5,884.5L463.0,879.3L465.5,876.6L468.0,824.1L470.5,881.1L473.0,884.1L475.5,887.1L478.0,893.9L480.5,886.4L483.0,894.2L485.5,892.3L488.0,887.2L490.5,895.0L493.0,898.2L495.5,892.6L498.0,895.7L500.5,894.5L503.0,892.7L505.5,890.0L508.0,897.0L510.5,886.8L513.0,891.5L515.5,891.6L518.0,888.1L520.5,884.4L523.0,895.5L525.5,896.8L528.0,892.7L530.5,890.2L533.0,894.8L535.5,894.3L538.0,891.4L540.5,895.5L543.0,889.1L545.5,890.6L548.0,892.4L550.5,884.4L553.0,891.2L555.5,895.5L558.0,886.5L560.5,868.5L563.0,808.0L565.5,878.2L568.0,893.3L570.5,885.3L573.0,879.2L575.5,883.2L578.0,875.8L580.5,879.3L583.0,886.4L585.5,895.2L588.0,897.9L590.5,884.7L593.0,877.2L595.5,867.8L598.0,869.7L600.5,864.5L603.0,799.9L605.5,869.5L608.0,870.6L610.5,884.9L613.0,883.9L615.5,876.7L618.0,878.8L620.5,877.2L623.0,885.6L625.5,885.8L628.0,876.4L630.5,874.0L633.0,881.5L635.5,850.6L638.0,869.5L640.5,886.1L643.0,877.2L645.5,878.7L648.0,862.0L650.5,795.1L653.0,872.8L655.5,865.0L658.0,879.5L660.5,881.3L663.0,879.4L665.5,879.1L668.0,877.5L670.5,888.1L673.0,876.8L675.5,893.7L678.0,894.7L680.5,888.4L683.0,885.3L685.5,883.0L688.0,883.6L690.5,883.7L693.0,864.8L695.5,877.2L698.0,889.9L700.5,885.6L703.0,891.7L705.5,889.9L708.0,889.1L710.5,893.8L713.0,887.3L715.5,885.9L718.0,893.9L720.5,889.4L723.0,887.6L725.5,887.9L728.0,893.2L730.5,879.8L733.0,891.8L735.5,885.7L738.0,894.4L740.5,861.2L743.0,873.2L745.5,882.2L748.0,875.3L750.5,875.2L753.0,878.6L755.5,864.5L758.0,799.9L760.5,874.8L763.0,874.5L765.5,869.3L768.0,809.6L770.5,878.9L773.0,897.3L775.5,887.1L778.0,883.2L780.5,895.2L783.0,894.4L785.5,885.2L788.0,879.4L790.5,888.4L793.0,892.8L795.5,883.1L798.0,871.1L800.5,873.6L803.0,876.5L805.5,888.0L808.0,892.3L810.5,891.3L813.0,877.1L815.5,874.0L818.0,875.8L820.5,866.9L823.0,804.8L825.5,876.8L828.0,885.4L830.5,883.9L833.0,892.6L835.5,879.6L838.0,878.0L840.5,865.4L843.0,860.2L845.5,858.9L848.0,857.0L850.5,854.1L853.0,854.4L855.5,863.7L858.0,855.0L860.5,856.6L863.0,857.6L865.5,846.4L868.0,846.1L870.5,852.0L873.0,874.6L875.5,884.7L878.0,890.1L880.5,875.8L883.0,874.5L885.5,867.7L888.0,882.2L890.5,882.8L893.0,883.0L895.5,880.1L898.0,876.6L900.5,824.1L903.0,870.3L905.5,882.2L908.0,886.0L910.5,881.2L913.0,884.1L915.5,881.1L918.0,887.5L920.5,882.9L923.0,883.0L925.5,876.1L928.0,882.4L930.5,864.5" fill="none" stroke="#7eb26d" stroke-width="1" stroke-linejoin="round"/><path d="M63.0,874.3L65.5,891.9L68.0,883.8L70.5,890.4L73.0,884.6L75.5,893.8L78.0,861.2L80.5,793.5L83.0,872.1L85.5,879.4L88.0,885.9L90.5,881.7L93.0,880.2L95.5,864.6L98.0,878.9L100.5,875.6L103.0,881.0L105.5,883.0L108.0,863.2L110.5,879.6L113.0,874.4L115.5,888.6L118.0,885.6L120.5,888.6L123.0,887.5L125.5,880.6L128.0,832.2L130.5,888.3L133.0,887.7L135.5,881.8L138.0,881.2L140.5,877.3L143.0,890.6L145.5,888.7L148.0,886.5L150.5,877.4L153.0,889.3L155.5,892.5L158.0,889.4L160.5,884.0L163.0,894.1L165.5,896.3L168.0,890.7L170.5,886.9L173.0,876.6L175.5,876.6L178.0,827.4L180.5,873.3L183.0,884.1L185.5,893.6L188.0,895.5L190.5,901.2L193.0,899.5L195.5,891.2L198.0,888.4L200.5,894.6L203.0,886.7L205.5,892.2L208.0,882.5L210.5,889.4L213.0,889.4L215.5,878.6L218.0,877.2L220.5,859.1L223.0,871.8L225.5,816.1L228.0,879.7L230.5,882.6L233.0,877.6L235.5,876.8L238.0,886.6L240.5,895.0L243.0,898.7L245.5,893.2L248.0,891.9L250.5,885.8L253.0,882.7L255.5,897.3L258.0,898.4L260.5,897.8L263.0,886.4L265.5,892.9L268.0,902.2L270.5,889.8L273.0,877.2L275.5,885.8L278.0,897.8L280.5,890.8L283.0,891.3L285.5,886.4L288.0,897.2L290.5,897.5L293.0,900.4L295.5,893.2L298.0,886.1L300.5,890.8L303.0,890.7L305.5,895.0L308.0,885.4L310.5,893.4L313.0,901.8L315.5,891.7L318.0,889.3L320.5,895.7L323.0,904.2L325.5,903.2L328.0,895.3L330.5,848.3L333.0,894.5L335.5,892.9L338.0,885.5L340.5,886.3L343.0,889.1L345.5,888.1L348.0,885.9L350.5,896.8L353.0,892.3L355.5,890.0L358.0,881.2L360.5,894.1L363.0,891.3L365.5,882.9L368.0,867.1L370.5,824.1L373.0,885.0L375.5,883.5L378.0,875.6L380.5,881.9L383.0,882.6L385.5,871.2L388.0,851.3L390.5,866.6L393.0,880.3L395.5,869.8L398.0,872.3L400.5,876.9L403.0,881.0L405.5,878.9L408.0,881.8L410.5,848.3L413.0,876.0L415.5,881.6L418.0,884.1L420.5,893.8L423.0,886.2L425.5,895.6L428.0,899.7L430.5,886.3L433.0,887.2L435.5,892.4L438.0,885.7L440.5,888.2L443.0,897.5L445.5,889.6L448.0,899.0L450.5,886.1L453.0,884.8L455.5,888.2L458.0,893.9L460.5,881.7L463.0,889.0L465.5,892.1L468.0,876.8L470.5,876.5L473.0,876.3L475.5,872.0L478.0,874.1L480.5,880.5L483.0,888.8L485.5,884.0L488.0,876.2L490.5,878.6L493.0,845.1L495.5,875.4L498.0,874.9L500.5,877.6L503.0,878.1L505.5,862.0L508.0,878.3L510.5,878.4L513.0,861.2L515.5,793.5L518.0,872.1L520.5,877.9L523.0,884.0L525.5,880.0L528.0,879.8L530.5,877.0L533.0,881.1L535.5,882.4L538.0,886.0L540.5,888.6L543.0,889.0L545.5,892.7L548.0,886.2L550.5,882.3L553.0,884.0L555.5,892.2L558.0,881.7L560.5,872.5L563.0,816.1L565.5,881.6L568.0,894.7L570.5,889.0L573.0,883.4L575.5,876.9L578.0,874.9L580.5,872.0L583.0,880.2L585.5,885.0L588.0,878.2L590.5,870.5L593.0,863.3L595.5,849.8L598.0,867.8L600.5,858.8L603.0,788.6L605.5,870.1L608.0,870.5L610.5,878.8L613.0,872.7L615.5,873.8L618.0,873.1L620.5,867.2L623.0,873.9L625.5,871.2L628.0,865.2L630.5,870.2L633.0,871.3L635.5,879.3L638.0,881.7L640.5,880.8L643.0,886.1L645.5,884.1L648.0,885.3L650.5,876.9L653.0,876.0L655.5,877.9L658.0,873.2L660.5,824.1L663.0,867.7L665.5,876.2L668.0,872.4L670.5,878.5L673.0,884.6L675.5,891.4L678.0,884.0L680.5,879.6L683.0,878.4L685.5,877.2L688.0,832.2L690.5,888.3L693.0,880.5L695.5,876.3L698.0,871.5L700.5,872.2L703.0,876.2L705.5,876.6L708.0,824.1L710.5,874.9L713.0,888.3L715.5,886.2L718.0,889.4L720.5,893.1L723.0,890.5L725.5,891.3L728.0,885.2L730.5,882.1L733.0,886.1L735.5,886.7L738.0,890.3L740.5,884.4L743.0,872.0L745.5,863.7L748.0,870.6L750.5,867.9L753.0,865.2L755.5,863.9L758.0,865.3L760.5,877.7L763.0,877.4L765.5,873.9L768.0,857.9L770.5,857.2L773.0,785.4L775.5,868.7L778.0,880.2L780.5,887.9L783.0,891.4L785.5,893.7L788.0,892.3L790.5,885.9L793.0,889.7L795.5,879.3L798.0,891.2L800.5,881.4L803.0,864.5L805.5,799.9L808.0,874.8L810.5,888.4L813.0,864.4L815.5,877.6L818.0,872.4L820.5,885.8L823.0,879.8L825.5,869.9L828.0,871.6L830.5,866.1L833.0,881.1L835.5,875.6L838.0,876.5L840.5,851.0L843.0,853.4L845.5,844.2L848.0,850.5L850.5,860.1L853.0,816.1L855.5,845.7L858.0,844.1L860.5,846.9L863.0,851.3L865.5,848.0L868.0,845.8L870.5,854.1L873.0,872.9L875.5,872.5L878.0,878.8L880.5,871.9L883.0,872.3L885.5,877.7L888.0,868.8L890.5,869.6L893.0,877.7L895.5,882.6L898.0,848.3L900.5,767.7L903.0,861.2L905.5,888.1L908.0,888.4L910.5,870.9L913.0,812.8L915.5,880.2L918.0,887.2L920.5,890.9L923.0,882.1L925.5,889.2L928.0,884.5L930.5,880.1" fill="none" stroke="#eab839" stroke-width="1" stroke-linejoin="round"/><path d="M63.0,853.2L65.5,885.5L68.0,895.4L70.5,896.9L73.0,901.1L75.5,894.8L78.0,850.8L80.5,772.5L83.0,826.6L85.5,724.1L88.0,842.9L90.5,892.0L93.0,896.8L95.5,887.3L98.0,892.9L100.5,886.9L103.0,895.1L105.5,892.1L108.0,888.0L110.5,895.7L113.0,890.5L115.5,874.5L118.0,882.4L120.5,883.6L123.0,880.5L125.5,870.1L128.0,811.2L130.5,879.5L133.0,900.1L135.5,895.8L138.0,854.8L140.5,897.8L143.0,888.1L145.5,888.9L148.0,897.0L150.5,890.0L153.0,874.0L155.5,887.3L158.0,873.2L160.5,893.2L163.0,895.4L165.5,880.6L168.0,832.2L170.5,888.3L173.0,903.5L175.5,870.1L178.0,811.2L180.5,879.5L183.0,894.4L185.5,890.1L188.0,893.9L190.5,894.0L193.0,885.6L195.5,893.1L198.0,897.1L200.5,882.8L203.0,887.8L205.5,893.9L208.0,883.3L210.5,884.6L213.0,897.3L215.5,891.5L218.0,878.7L220.5,895.2L223.0,861.2L225.5,793.5L228.0,872.1L230.5,889.2L233.0,880.5L235.5,890.9L238.0,891.7L240.5,895.2L243.0,885.4L245.5,880.4L248.0,890.8L250.5,899.2L253.0,888.1L255.5,885.5L258.0,883.8L260.5,894.0L263.0,892.9L265.5,889.4L268.0,887.4L270.5,862.9L273.0,796.7L275.5,873.4L278.0,879.6L280.5,882.9L283.0,874.0L285.5,870.9L288.0,889.9L290.5,894.1L293.0,889.4L295.5,893.4L298.0,896.4L300.5,888.0L303.0,898.2L305.5,885.1L308.0,879.9L310.5,879.8L313.0,880.9L315.5,884.0L318.0,875.0L320.5,820.9L323.0,883.6L325.5,896.8L328.0,883.1L330.5,863.2L333.0,880.4L335.5,883.5L338.0,888.7L340.5,880.3L343.0,891.7L345.5,885.1L348.0,880.4L350.5,892.0L353.0,885.6L355.5,880.1L358.0,882.3L360.5,877.7L363.0,876.3L365.5,874.1L368.0,860.4L370.5,791.9L373.0,871.4L375.5,885.5L378.0,867.8L380.5,862.7L383.0,866.0L385.5,849.5L388.0,858.8L390.5,859.4L393.0,860.1L395.5,867.6L398.0,848.3L400.5,861.6L403.0,840.3L405.5,751.5L408.0,854.5L410.5,871.6L413.0,861.6L415.5,862.0L418.0,795.1L420.5,872.8L423.0,885.6L425.5,885.9L428.0,879.6L430.5,873.4L433.0,871.9L435.5,871.0L438.0,882.8L440.5,877.9L443.0,886.1L445.5,878.1L448.0,878.3L450.5,883.4L453.0,886.4L455.5,885.0L458.0,891.0L460.5,884.7L463.0,880.1L465.5,870.1L468.0,811.2L470.5,876.6L473.0,873.6L475.5,886.7L478.0,875.0L480.5,884.0L483.0,869.3L485.5,884.3L488.0,877.0L490.5,874.1L493.0,819.3L495.5,882.9L498.0,887.2L500.5,890.1L503.0,890.7L505.5,888.5L508.0,868.4L510.5,870.1L513.0,872.5L515.5,816.1L518.0,881.6L520.5,888.6L523.0,893.6L525.5,885.3L528.0,889.0L530.5,899.2L533.0,894.0L535.5,900.6L538.0,877.3L540.5,885.0L543.0,881.0L545.5,893.5L548.0,885.3L550.5,882.9L553.0,888.6L555.5,892.3L558.0,884.4L560.5,863.7L563.0,798.3L565.5,874.1L568.0,891.9L570.5,892.7L573.0,866.0L575.5,880.6L578.0,874.5L580.5,872.9L583.0,869.9L585.5,886.0L588.0,887.0L590.5,876.9L593.0,871.9L595.5,866.7L598.0,870.7L600.5,872.9L603.0,864.5L605.5,862.5L608.0,871.5L610.5,855.6L613.0,782.2L615.5,867.3L618.0,876.3L620.5,878.3L623.0,830.6L625.5,877.2L628.0,879.3L630.5,877.6L633.0,878.7L635.5,828.2L638.0,727.3L640.5,844.3L643.0,870.5L645.5,886.2L648.0,874.9L650.5,890.2L653.0,880.6L655.5,879.5L658.0,866.1L660.5,803.2L663.0,876.1L665.5,878.2L668.0,890.2L670.5,892.4L673.0,879.6L675.5,888.9L678.0,892.5L680.5,887.1L683.0,882.9L685.5,864.5L688.0,799.9L690.5,874.8L693.0,879.3L695.5,875.6L698.0,876.5L700.5,879.1L703.0,885.4L705.5,864.5L708.0,799.9L710.5,874.8L713.0,884.5L715.5,881.8L718.0,880.7L720.5,874.1L723.0,878.6L725.5,877.0L728.0,884.9L730.5,885.9L733.0,889.6L735.5,890.7L738.0,884.9L740.5,874.1L743.0,868.7L745.5,878.6L748.0,875.2L750.5,865.5L753.0,864.7L755.5,876.3L758.0,878.3L760.5,884.4L763.0,887.1L765.5,869.3L768.0,809.6L770.5,878.9L773.0,891.1L775.5,891.4L778.0,893.6L780.5,891.6L783.0,882.1L785.5,885.4L788.0,888.4L790.5,880.1L793.0,887.7L795.5,891.4L798.0,885.1L800.5,889.7L803.0,837.0L805.5,745.1L808.0,851.8L810.5,883.9L813.0,859.6L815.5,790.3L818.0,857.2L820.5,785.4L823.0,868.7L825.5,885.6L828.0,878.6L830.5,880.7L833.0,885.7L835.5,882.0L838.0,872.5L840.5,816.1L843.0,850.4L845.5,848.8L848.0,850.1L850.5,832.2L853.0,782.2L855.5,854.3L858.0,851.4L860.5,852.5L863.0,832.2L865.5,845.5L868.0,832.2L870.5,849.4L873.0,881.0L875.5,887.5L878.0,883.3L880.5,878.7L883.0,870.1L885.5,811.2L888.0,868.2L890.5,864.5L893.0,812.8L895.5,873.8L898.0,871.5L900.5,881.2L903.0,874.3L905.5,878.5L908.0,879.0L910.5,880.6L913.0,832.2L915.5,887.7L918.0,890.2L920.5,895.4L923.0,891.2L925.5,888.2L928.0,882.2L930.5,891.1" fill="none" stroke="#6ed0e0" stroke-width="1" stroke-linejoin="round"/><text x="57" y="690" text-anchor="end">150.0%</text><text x="57" y="770" text-anchor="end">100.0%</text><text x="57" y="851" text-anchor="end">50.0%</text><text x="57" y="932" text-anchor="end">0%</text><text class="xl" x="86.7" y="946" text-anchor="middle">08:40</text><text class="xl" x="135.0" y="946" text-anchor="middle">08:50</text><text class="xl" x="183.4" y="946" text-anchor="middle">09:00</text><text class="xl" x="231.8" y="946" text-anchor="middle">09:10</text><text class="xl" x="280.1" y="946" text-anchor="middle">09:20</text><text class="xl" x="328.4" y="946" text-anchor="middle">09:30</text><text class="xl" x="376.8" y="946" text-anchor="middle">09:40</text><text class="xl" x="425.1" y="946" text-anchor="middle">09:50</text><text class="xl" x="473.5" y="946" text-anchor="middle">10:00</text><text class="xl" x="521.9" y="946" text-anchor="middle">10:10</text><text class="xl" x="570.2" y="946" text-anchor="middle">10:20</text><text class="xl" x="618.6" y="946" text-anchor="middle">10:30</text><text class="xl" x="666.9" y="946" text-anchor="middle">10:40</text><text class="xl" x="715.3" y="946" text-anchor="middle">10:50</text><text class="xl" x="763.6" y="946" text-anchor="middle">11:00</text><text class="xl" x="812.0" y="946" text-anchor="middle">11:10</text><text class="xl" x="860.3" y="946" text-anchor="middle">11:20</text><text class="xl" x="908.7" y="946" text-anchor="middle">11:30</text><rect x="1262" y="687" width="846" height="1" fill="rgba(200,200,200,0.22)"/><rect x="1262" y="747" width="846" height="1" fill="rgba(200,200,200,0.22)"/><rect x="1262" y="808" width="846" height="1" fill="rgba(200,200,200,0.22)"/><rect x="1262" y="868" width="846" height="1" fill="rgba(200,200,200,0.22)"/><rect x="1262" y="929" width="846" height="1" fill="rgba(200,200,200,0.22)"/><rect x="1379.00" y="687" width="1" height="242" fill="rgba(200,200,200,0.22)"/><rect x="1520.00" y="687" width="1" height="242" fill="rgba(200,200,200,0.22)"/><rect x="1661.00" y="687" width="1" height="242" fill="rgba(200,200,200,0.22)"/><rect x="1802.00" y="687" width="1" height="242" fill="rgba(200,200,200,0.22)"/><rect x="1943.00" y="687" width="1" height="242" fill="rgba(200,200,200,0.22)"/><rect x="2084.00" y="687" width="1" height="242" fill="rgba(200,200,200,0.22)"/><path d="M1262.0,702.9L1264.5,703.4L1267.0,702.9L1269.5,702.9L1272.0,702.2L1274.5,702.2L1277.0,702.2L1279.5,702.2L1282.0,702.2L1284.5,702.3L1287.0,702.5L1289.5,702.9L1292.0,703.6L1294.5,703.4L1297.0,704.0L1299.5,704.0L1302.0,704.2L1304.5,704.6L1307.0,704.1L1309.5,704.1L1312.0,703.9L1314.5,703.6L1317.0,703.3L1319.5,703.1L1322.0,702.7L1324.5,702.5L1327.0,701.0L1329.5,703.0L1332.0,703.3L1334.5,703.2L1337.0,703.7L1339.5,703.7L1342.0,703.9L1344.5,703.8L1347.0,703.9L1349.5,703.4L1352.0,703.4L1354.5,703.3L1357.0,702.9L1359.5,704.3L1362.0,704.0L1364.5,703.5L1367.0,704.0L1369.5,703.5L1372.0,703.5L1374.5,704.1L1377.0,703.9L1379.5,703.5L1382.0,702.2L1384.5,702.2L1387.0,702.7L1389.5,702.9L1392.0,702.6L1394.5,702.2L1397.0,702.6L1399.5,703.0L1402.0,703.1L1404.5,702.6L1407.0,702.6L1409.5,702.3L1412.0,702.2L1414.5,702.5L1417.0,703.1L1419.5,703.2L1422.0,702.9L1424.5,704.1L1427.0,703.8L1429.5,703.4L1432.0,703.9L1434.5,704.1L1437.0,703.5L1439.5,703.9L1442.0,703.6L1444.5,702.3L1447.0,702.8L1449.5,702.9L1452.0,703.1L1454.5,703.6L1457.0,703.9L1459.5,703.4L1462.0,703.5L1464.5,703.5L1467.0,703.1L1469.5,703.1L1472.0,703.6L1474.5,703.1L1477.0,702.9L1479.5,703.1L1482.0,702.6L1484.5,702.9L1487.0,702.9L1489.5,703.2L1492.0,702.7L1494.5,702.6L1497.0,702.4L1499.5,702.3L1502.0,702.5L1504.5,702.4L1507.0,702.9L1509.5,703.5L1512.0,703.0L1514.5,702.8L1517.0,702.2L1519.5,702.2L1522.0,702.8L1524.5,700.7L1527.0,702.4L1529.5,702.2L1532.0,702.2L1534.5,702.4L1537.0,702.2L1539.5,702.7L1542.0,702.5L1544.5,702.4L1547.0,702.7L1549.5,702.2L1552.0,702.2L1554.5,700.7L1557.0,702.7L1559.5,703.1L1562.0,701.8L1564.5,703.2L1567.0,704.3L1569.5,704.2L1572.0,704.2L1574.5,703.0L1577.0,704.6L1579.5,704.3L1582.0,704.2L1584.5,704.2L1587.0,703.6L1589.5,703.9L1592.0,703.8L1594.5,703.5L1597.0,703.5L1599.5,703.8L1602.0,704.1L1604.5,704.5L1607.0,704.1L1609.5,704.5L1612.0,704.1L1614.5,703.5L1617.0,704.0L1619.5,703.8L1622.0,703.9L1624.5,702.4L1627.0,704.4L1629.5,704.5L1632.0,704.2L1634.5,703.7L1637.0,703.6L1639.5,704.0L1642.0,704.4L1644.5,704.4L1647.0,704.6L1649.5,704.6L1652.0,704.6L1654.5,704.6L1657.0,704.4L1659.5,704.6L1662.0,704.5L1664.5,704.0L1667.0,703.7L1669.5,704.5L1672.0,703.9L1674.5,704.4L1677.0,704.6L1679.5,704.0L1682.0,704.3L1684.5,704.6L1687.0,704.6L1689.5,704.6L1692.0,704.6L1694.5,704.6L1697.0,704.6L1699.5,704.6L1702.0,704.1L1704.5,703.4L1707.0,703.2L1709.5,703.7L1712.0,703.8L1714.5,703.4L1717.0,703.3L1719.5,703.6L1722.0,703.1L1724.5,703.3L1727.0,702.9L1729.5,703.4L1732.0,703.7L1734.5,703.7L1737.0,703.9L1739.5,704.4L1742.0,704.2L1744.5,704.1L1747.0,704.4L1749.5,704.0L1752.0,703.9L1754.5,704.3L1757.0,703.8L1759.5,704.2L1762.0,704.1L1764.5,704.4L1767.0,704.6L1769.5,704.1L1772.0,703.6L1774.5,703.5L1777.0,703.7L1779.5,703.4L1782.0,703.2L1784.5,703.5L1787.0,704.0L1789.5,704.2L1792.0,704.4L1794.5,704.1L1797.0,702.1L1799.5,703.5L1802.0,703.1L1804.5,702.7L1807.0,704.5L1809.5,704.6L1812.0,704.5L1814.5,704.6L1817.0,704.4L1819.5,704.1L1822.0,704.4L1824.5,704.1L1827.0,704.3L1829.5,704.6L1832.0,704.4L1834.5,701.7L1837.0,703.7L1839.5,704.2L1842.0,703.9L1844.5,704.2L1847.0,704.2L1849.5,704.1L1852.0,703.7L1854.5,703.9L1857.0,704.1L1859.5,704.1L1862.0,704.0L1864.5,703.5L1867.0,703.8L1869.5,704.2L1872.0,704.2L1874.5,704.5L1877.0,704.1L1879.5,703.9L1882.0,704.0L1884.5,703.6L1887.0,704.0L1889.5,703.6L1892.0,703.8L1894.5,702.6L1897.0,704.4L1899.5,704.6L1902.0,704.0L1904.5,703.6L1907.0,703.6L1909.5,703.2L1912.0,702.8L1914.5,701.8L1917.0,701.4L1919.5,702.6L1922.0,703.2L1924.5,703.7L1927.0,703.5L1929.5,703.0L1932.0,702.5L1934.5,702.4L1937.0,703.0L1939.5,702.9L1942.0,702.6L1944.5,703.2L1947.0,703.4L1949.5,703.9L1952.0,704.3L1954.5,703.8L1957.0,704.1L1959.5,704.4L1962.0,704.0L1964.5,704.3L1967.0,704.4L1969.5,704.6L1972.0,704.3L1974.5,704.3L1977.0,704.4L1979.5,704.6L1982.0,704.6L1984.5,704.5L1987.0,704.6L1989.5,704.6L1992.0,704.6L1994.5,704.6L1997.0,704.6L1999.5,703.1L2002.0,704.6L2004.5,704.6L2007.0,704.6L2009.5,704.2L2012.0,703.9L2014.5,704.3L2017.0,704.6L2019.5,701.8L2022.0,703.9L2024.5,703.3L2027.0,703.0L2029.5,702.2L2032.0,702.2L2034.5,702.6L2037.0,702.5L2039.5,702.6L2042.0,702.9L2044.5,702.5L2047.0,702.5L2049.5,702.7L2052.0,703.0L2054.5,703.0L2057.0,702.5L2059.5,702.2L2062.0,700.9L2064.5,702.2L2067.0,702.2L2069.5,702.7L2072.0,702.3L2074.5,702.4L2077.0,702.3L2079.5,702.7L2082.0,702.9L2084.5,703.0L2087.0,703.2L2089.5,703.2L2092.0,703.5L2094.5,703.2L2097.0,702.8L2099.5,703.3L2102.0,703.6L2104.5,703.3L2107.0,703.6" fill="none" stroke="#7eb26d" stroke-width="1.3" stroke-linejoin="round"/><path d="M1262.0,707.3L1264.5,707.5L1267.0,707.2L1269.5,707.5L1272.0,707.5L1274.5,706.6L1277.0,708.7L1279.5,708.5L1282.0,708.1L1284.5,708.2L1287.0,708.0L1289.5,709.5L1292.0,709.2L1294.5,708.8L1297.0,708.2L1299.5,708.1L1302.0,708.7L1304.5,709.0L1307.0,709.2L1309.5,708.7L1312.0,708.8L1314.5,708.7L1317.0,709.3L1319.5,709.5L1322.0,709.5L1324.5,709.5L1327.0,709.3L1329.5,709.3L1332.0,709.0L1334.5,708.0L1337.0,708.3L1339.5,709.5L1342.0,708.0L1344.5,709.4L1347.0,708.8L1349.5,708.3L1352.0,707.9L1354.5,707.5L1357.0,707.5L1359.5,707.6L1362.0,707.8L1364.5,707.4L1367.0,707.9L1369.5,707.5L1372.0,707.4L1374.5,707.2L1377.0,707.2L1379.5,707.5L1382.0,707.7L1384.5,707.3L1387.0,707.2L1389.5,706.8L1392.0,707.1L1394.5,706.5L1397.0,706.5L1399.5,706.3L1402.0,706.3L1404.5,706.9L1407.0,706.6L1409.5,706.4L1412.0,706.3L1414.5,706.6L1417.0,708.1L1419.5,708.3L1422.0,708.0L1424.5,708.1L1427.0,708.5L1429.5,708.0L1432.0,707.7L1434.5,707.2L1437.0,707.8L1439.5,708.8L1442.0,709.2L1444.5,709.2L1447.0,708.0L1449.5,709.5L1452.0,709.2L1454.5,709.0L1457.0,709.5L1459.5,709.1L1462.0,709.1L1464.5,709.4L1467.0,709.5L1469.5,709.3L1472.0,708.8L1474.5,708.6L1477.0,708.7L1479.5,708.5L1482.0,708.9L1484.5,708.8L1487.0,709.3L1489.5,708.9L1492.0,708.6L1494.5,708.3L1497.0,708.8L1499.5,708.3L1502.0,708.0L1504.5,707.8L1507.0,708.0L1509.5,708.3L1512.0,708.4L1514.5,708.1L1517.0,707.9L1519.5,708.2L1522.0,708.4L1524.5,708.7L1527.0,708.6L1529.5,708.6L1532.0,709.0L1534.5,709.5L1537.0,709.1L1539.5,708.7L1542.0,708.8L1544.5,709.2L1547.0,709.3L1549.5,708.9L1552.0,708.7L1554.5,708.6L1557.0,708.3L1559.5,708.2L1562.0,707.7L1564.5,708.2L1567.0,708.7L1569.5,709.1L1572.0,709.0L1574.5,709.4L1577.0,708.9L1579.5,708.9L1582.0,709.1L1584.5,709.3L1587.0,708.9L1589.5,708.6L1592.0,709.1L1594.5,709.4L1597.0,709.5L1599.5,709.4L1602.0,709.5L1604.5,709.5L1607.0,709.5L1609.5,708.6L1612.0,708.1L1614.5,708.4L1617.0,708.1L1619.5,707.7L1622.0,707.8L1624.5,707.6L1627.0,706.7L1629.5,706.9L1632.0,707.4L1634.5,707.8L1637.0,707.6L1639.5,707.4L1642.0,707.1L1644.5,707.1L1647.0,706.8L1649.5,706.7L1652.0,706.7L1654.5,706.8L1657.0,706.4L1659.5,706.3L1662.0,706.7L1664.5,706.3L1667.0,706.3L1669.5,706.3L1672.0,706.3L1674.5,706.6L1677.0,706.7L1679.5,706.3L1682.0,706.4L1684.5,706.3L1687.0,706.3L1689.5,706.5L1692.0,706.3L1694.5,706.3L1697.0,706.3L1699.5,706.3L1702.0,704.8L1704.5,706.8L1707.0,706.5L1709.5,706.3L1712.0,706.5L1714.5,706.7L1717.0,707.1L1719.5,707.1L1722.0,706.6L1724.5,706.9L1727.0,706.6L1729.5,706.7L1732.0,706.7L1734.5,706.8L1737.0,706.6L1739.5,707.1L1742.0,706.3L1744.5,706.6L1747.0,707.1L1749.5,707.4L1752.0,707.8L1754.5,708.2L1757.0,708.3L1759.5,708.3L1762.0,708.5L1764.5,708.7L1767.0,709.1L1769.5,709.5L1772.0,709.3L1774.5,708.9L1777.0,709.2L1779.5,709.1L1782.0,709.2L1784.5,709.2L1787.0,709.0L1789.5,708.4L1792.0,708.2L1794.5,708.1L1797.0,708.5L1799.5,707.9L1802.0,708.4L1804.5,707.9L1807.0,707.6L1809.5,707.9L1812.0,708.2L1814.5,707.8L1817.0,707.6L1819.5,707.2L1822.0,707.6L1824.5,707.9L1827.0,707.6L1829.5,707.3L1832.0,707.6L1834.5,707.5L1837.0,707.2L1839.5,707.1L1842.0,707.6L1844.5,707.7L1847.0,707.5L1849.5,707.8L1852.0,708.4L1854.5,708.3L1857.0,708.8L1859.5,708.3L1862.0,708.3L1864.5,708.8L1867.0,709.0L1869.5,708.6L1872.0,709.5L1874.5,709.5L1877.0,709.5L1879.5,709.3L1882.0,709.0L1884.5,709.0L1887.0,708.4L1889.5,708.1L1892.0,708.5L1894.5,708.3L1897.0,708.3L1899.5,708.7L1902.0,708.7L1904.5,708.7L1907.0,709.3L1909.5,708.8L1912.0,709.2L1914.5,709.0L1917.0,708.7L1919.5,709.0L1922.0,708.8L1924.5,709.0L1927.0,708.9L1929.5,707.5L1932.0,708.6L1934.5,709.1L1937.0,709.1L1939.5,709.0L1942.0,708.4L1944.5,708.8L1947.0,709.3L1949.5,709.1L1952.0,709.3L1954.5,709.5L1957.0,709.5L1959.5,709.3L1962.0,707.7L1964.5,709.3L1967.0,709.5L1969.5,709.4L1972.0,709.5L1974.5,709.2L1977.0,709.4L1979.5,709.1L1982.0,709.5L1984.5,709.1L1987.0,708.8L1989.5,709.3L1992.0,709.2L1994.5,709.5L1997.0,709.5L1999.5,709.0L2002.0,709.4L2004.5,708.8L2007.0,708.2L2009.5,706.6L2012.0,706.3L2014.5,706.3L2017.0,706.8L2019.5,707.2L2022.0,707.0L2024.5,708.7L2027.0,709.3L2029.5,707.3L2032.0,708.6L2034.5,709.5L2037.0,709.4L2039.5,709.5L2042.0,709.5L2044.5,709.1L2047.0,708.8L2049.5,708.9L2052.0,708.3L2054.5,707.8L2057.0,707.4L2059.5,705.5L2062.0,707.2L2064.5,706.8L2067.0,706.7L2069.5,706.7L2072.0,707.0L2074.5,706.4L2077.0,706.4L2079.5,706.5L2082.0,707.8L2084.5,707.7L2087.0,708.2L2089.5,708.5L2092.0,711.2L2094.5,711.2L2097.0,711.0L2099.5,711.2L2102.0,711.1L2104.5,710.7L2107.0,710.4" fill="none" stroke="#eab839" stroke-width="1.3" stroke-linejoin="round"/><path d="M1262.0,703.9L1264.5,703.6L1267.0,704.1L1269.5,704.2L1272.0,704.3L1274.5,704.4L1277.0,704.4L1279.5,704.7L1282.0,705.1L1284.5,704.6L1287.0,704.4L1289.5,704.7L1292.0,702.9L1294.5,704.4L1297.0,704.0L1299.5,704.5L1302.0,704.0L1304.5,703.8L1307.0,703.4L1309.5,703.4L1312.0,703.4L1314.5,702.9L1317.0,703.3L1319.5,702.7L1322.0,702.5L1324.5,702.5L1327.0,702.5L1329.5,702.8L1332.0,702.8L1334.5,701.8L1337.0,703.2L1339.5,702.7L1342.0,702.9L1344.5,703.2L1347.0,703.1L1349.5,703.6L1352.0,703.6L1354.5,703.8L1357.0,703.6L1359.5,703.2L1362.0,702.7L1364.5,702.8L1367.0,702.5L1369.5,703.0L1372.0,702.5L1374.5,702.5L1377.0,702.9L1379.5,703.4L1382.0,704.0L1384.5,703.8L1387.0,703.6L1389.5,703.3L1392.0,702.8L1394.5,702.5L1397.0,702.5L1399.5,702.5L1402.0,702.5L1404.5,704.1L1407.0,704.2L1409.5,704.5L1412.0,703.9L1414.5,703.6L1417.0,703.2L1419.5,703.5L1422.0,704.0L1424.5,704.4L1427.0,704.8L1429.5,705.1L1432.0,704.8L1434.5,705.1L1437.0,705.1L1439.5,705.0L1442.0,704.6L1444.5,705.0L1447.0,704.7L1449.5,704.6L1452.0,704.6L1454.5,704.1L1457.0,703.5L1459.5,703.5L1462.0,703.1L1464.5,703.2L1467.0,702.5L1469.5,702.5L1472.0,703.0L1474.5,702.9L1477.0,703.0L1479.5,702.8L1482.0,702.6L1484.5,703.0L1487.0,703.4L1489.5,703.2L1492.0,703.6L1494.5,703.8L1497.0,703.6L1499.5,703.6L1502.0,701.8L1504.5,703.4L1507.0,703.1L1509.5,703.0L1512.0,703.5L1514.5,703.2L1517.0,702.9L1519.5,703.0L1522.0,702.5L1524.5,702.5L1527.0,702.7L1529.5,702.8L1532.0,702.9L1534.5,702.5L1537.0,702.6L1539.5,702.5L1542.0,702.5L1544.5,701.0L1547.0,702.5L1549.5,702.5L1552.0,703.4L1554.5,703.8L1557.0,704.2L1559.5,704.4L1562.0,704.6L1564.5,704.3L1567.0,703.9L1569.5,704.0L1572.0,703.1L1574.5,703.0L1577.0,703.1L1579.5,703.1L1582.0,702.7L1584.5,702.5L1587.0,702.5L1589.5,703.0L1592.0,702.5L1594.5,702.9L1597.0,702.9L1599.5,702.5L1602.0,702.5L1604.5,702.6L1607.0,702.5L1609.5,702.8L1612.0,702.9L1614.5,702.8L1617.0,702.5L1619.5,702.5L1622.0,702.5L1624.5,702.8L1627.0,703.3L1629.5,703.3L1632.0,703.3L1634.5,703.8L1637.0,703.5L1639.5,703.9L1642.0,705.1L1644.5,705.1L1647.0,705.0L1649.5,705.1L1652.0,705.1L1654.5,704.9L1657.0,703.8L1659.5,704.3L1662.0,703.9L1664.5,704.2L1667.0,704.4L1669.5,703.8L1672.0,704.3L1674.5,703.8L1677.0,704.3L1679.5,703.8L1682.0,703.6L1684.5,703.2L1687.0,702.7L1689.5,703.0L1692.0,702.9L1694.5,703.1L1697.0,702.6L1699.5,703.2L1702.0,703.6L1704.5,703.9L1707.0,703.6L1709.5,703.6L1712.0,703.2L1714.5,703.8L1717.0,703.2L1719.5,702.8L1722.0,702.7L1724.5,702.5L1727.0,702.5L1729.5,702.5L1732.0,702.5L1734.5,704.0L1737.0,704.5L1739.5,704.0L1742.0,702.7L1744.5,703.0L1747.0,702.5L1749.5,702.5L1752.0,702.5L1754.5,702.8L1757.0,703.4L1759.5,702.9L1762.0,702.8L1764.5,702.7L1767.0,702.5L1769.5,702.5L1772.0,702.5L1774.5,702.6L1777.0,702.5L1779.5,702.9L1782.0,703.2L1784.5,703.0L1787.0,703.3L1789.5,702.7L1792.0,703.0L1794.5,703.1L1797.0,703.6L1799.5,704.0L1802.0,703.5L1804.5,703.4L1807.0,703.9L1809.5,703.6L1812.0,703.9L1814.5,703.2L1817.0,703.5L1819.5,704.1L1822.0,704.5L1824.5,704.4L1827.0,704.8L1829.5,705.1L1832.0,705.1L1834.5,705.1L1837.0,704.9L1839.5,703.4L1842.0,703.7L1844.5,704.3L1847.0,704.2L1849.5,704.7L1852.0,705.1L1854.5,705.1L1857.0,705.1L1859.5,705.1L1862.0,705.1L1864.5,705.1L1867.0,705.1L1869.5,705.1L1872.0,704.9L1874.5,705.0L1877.0,705.1L1879.5,705.1L1882.0,705.1L1884.5,705.1L1887.0,705.1L1889.5,705.1L1892.0,704.9L1894.5,704.7L1897.0,704.3L1899.5,704.2L1902.0,704.5L1904.5,705.1L1907.0,704.5L1909.5,704.6L1912.0,701.7L1914.5,703.0L1917.0,702.9L1919.5,702.5L1922.0,702.9L1924.5,703.3L1927.0,703.8L1929.5,704.1L1932.0,703.1L1934.5,704.4L1937.0,704.7L1939.5,705.1L1942.0,705.1L1944.5,704.9L1947.0,704.9L1949.5,704.9L1952.0,704.4L1954.5,703.8L1957.0,703.9L1959.5,703.8L1962.0,703.6L1964.5,703.7L1967.0,703.3L1969.5,703.4L1972.0,703.2L1974.5,703.5L1977.0,703.3L1979.5,703.0L1982.0,703.1L1984.5,703.7L1987.0,703.7L1989.5,703.4L1992.0,703.1L1994.5,702.9L1997.0,702.5L1999.5,702.5L2002.0,702.5L2004.5,703.0L2007.0,702.7L2009.5,702.5L2012.0,702.5L2014.5,703.0L2017.0,703.6L2019.5,703.0L2022.0,703.0L2024.5,703.1L2027.0,702.9L2029.5,702.7L2032.0,702.5L2034.5,702.7L2037.0,702.5L2039.5,703.0L2042.0,703.4L2044.5,703.2L2047.0,703.0L2049.5,702.6L2052.0,701.0L2054.5,702.8L2057.0,702.9L2059.5,703.6L2062.0,703.1L2064.5,703.7L2067.0,703.9L2069.5,701.9L2072.0,702.9L2074.5,703.2L2077.0,703.1L2079.5,702.9L2082.0,702.5L2084.5,702.5L2087.0,701.0L2089.5,702.5L2092.0,702.5L2094.5,702.5L2097.0,702.5L2099.5,702.8L2102.0,703.3L2104.5,703.1L2107.0,702.5" fill="none" stroke="#6ed0e0" stroke-width="1.3" stroke-linejoin="round"/><text x="1256" y="690" text-anchor="end">19 GiB</text><text x="1256" y="750" text-anchor="end">14 GiB</text><text x="1256" y="811" text-anchor="end">9 GiB</text><text x="1256" y="871" text-anchor="end">5 GiB</text><text x="1256" y="932" text-anchor="end">0 B</text><text class="xl" x="1378.7" y="946" text-anchor="middle">09:00</text><text class="xl" x="1519.7" y="946" text-anchor="middle">09:30</text><text class="xl" x="1660.7" y="946" text-anchor="middle">10:00</text><text class="xl" x="1801.7" y="946" text-anchor="middle">10:30</text><text class="xl" x="1942.7" y="946" text-anchor="middle">11:00</text><text class="xl" x="2083.7" y="946" text-anchor="middle">11:30</text></svg>
</body></html>
